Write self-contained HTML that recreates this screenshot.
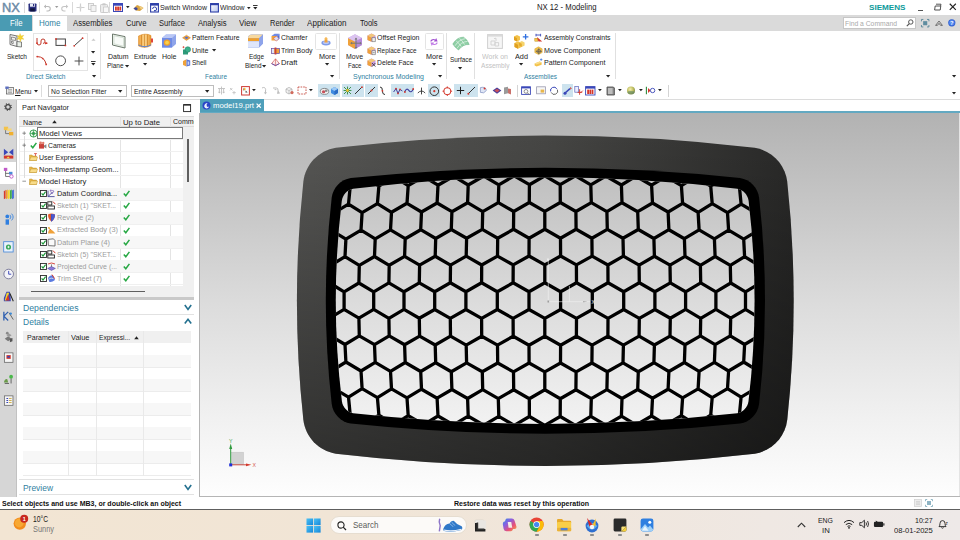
<!DOCTYPE html>
<html lang="en"><head><meta charset="utf-8"><title>NX 12 - Modeling</title>
<style>
html,body{margin:0;padding:0;}
body{width:960px;height:540px;overflow:hidden;position:relative;background:#fff;font-family:"Liberation Sans",sans-serif;}
#r{position:absolute;left:0;top:0;width:960px;height:540px;overflow:hidden;}
#r div,#r .t,#r .i{position:absolute;}
#r div{box-sizing:border-box;}
.t{white-space:nowrap;display:inline-block;transform-origin:0 50%;}
.i{overflow:visible;}
</style></head>
<body><div id="r">
<svg id="vp" width="761" height="386" viewBox="199 112 761 386" style="position:absolute;left:199px;top:112px">
<defs>
<linearGradient id="bg" gradientUnits="userSpaceOnUse" x1="0" y1="112" x2="0" y2="498"><stop offset="0" stop-color="#b2b2b2"/><stop offset="0.5" stop-color="#dcdcdc"/><stop offset="0.75" stop-color="#eeeeee"/><stop offset="1" stop-color="#fefefe"/></linearGradient>
<linearGradient id="fr" x1="0" y1="0" x2="1" y2="0"><stop offset="0" stop-color="#575755"/><stop offset="0.5" stop-color="#464644"/><stop offset="1" stop-color="#292928"/></linearGradient><linearGradient id="fv" x1="0" y1="0" x2="0" y2="1"><stop offset="0" stop-color="#000" stop-opacity="0"/><stop offset="1" stop-color="#000" stop-opacity="0.45"/></linearGradient>
<clipPath id="mc"><path d="M353.04 188.74Q545.20 165.66 737.36 188.74C743.36 190.04 747.86 194.90 748.62 200.90Q760.58 301.14 748.48 401.37C747.71 407.37 743.20 412.17 737.20 413.37Q545.20 434.43 353.20 413.37C347.20 412.17 342.69 407.37 341.92 401.37Q329.68 301.14 341.78 200.90C342.54 194.90 347.04 190.04 353.04 188.74Z"/></clipPath>
</defs>
<rect x="199" y="112" width="761" height="386" fill="url(#bg)"/>
<path d="M335.86 147.79Q545.30 123.41 754.74 147.79C772.14 150.76 785.15 164.34 787.26 181.74Q800.14 300.75 787.26 419.76C785.15 437.16 772.14 450.74 754.74 453.71Q545.30 478.09 335.86 453.71C318.46 450.74 305.45 437.16 303.34 419.76Q290.46 300.75 303.34 181.74C305.45 164.34 318.46 150.76 335.86 147.79Z" fill="url(#fr)"/>
<path d="M335.86 147.79Q545.30 123.41 754.74 147.79C772.14 150.76 785.15 164.34 787.26 181.74Q800.14 300.75 787.26 419.76C785.15 437.16 772.14 450.74 754.74 453.71Q545.30 478.09 335.86 453.71C318.46 450.74 305.45 437.16 303.34 419.76Q290.46 300.75 303.34 181.74C305.45 164.34 318.46 150.76 335.86 147.79Z" fill="url(#fv)"/>
<path d="M350.79 178.04Q545.40 157.56 740.01 178.04C750.21 179.71 757.85 187.63 759.12 197.83Q770.88 300.75 759.12 403.67C757.85 413.87 750.21 421.79 740.01 423.46Q545.40 443.94 350.79 423.46C340.59 421.79 332.95 413.87 331.68 403.67Q319.92 300.75 331.68 197.83C332.95 187.63 340.59 179.71 350.79 178.04Z" fill="#000"/>
<path d="M353.04 188.74Q545.20 165.66 737.36 188.74C743.36 190.04 747.86 194.90 748.62 200.90Q760.58 301.14 748.48 401.37C747.71 407.37 743.20 412.17 737.20 413.37Q545.20 434.43 353.20 413.37C347.20 412.17 342.69 407.37 341.92 401.37Q329.68 301.14 341.78 200.90C342.54 194.90 347.04 190.04 353.04 188.74Z" fill="url(#bg)"/>
<g clip-path="url(#mc)"><path d="M296.9 110.3L311.4 101.0M311.4 101.0L322.1 109.1M322.1 109.1L318.5 126.5M322.1 109.1L336.8 99.8M336.8 99.8L348.0 108.0M348.0 108.0L344.9 125.5M348.0 108.0L362.9 98.7M362.9 98.7L374.8 107.1M374.8 107.1L372.0 124.7M374.8 107.1L389.7 97.8M389.7 97.8L402.1 106.3M402.1 106.3L399.8 123.9M402.1 106.3L417.1 97.1M417.1 97.1L430.0 105.6M430.0 105.6L428.2 123.3M430.0 105.6L445.0 96.5M445.0 96.5L458.3 105.1M458.3 105.1L457.0 122.9M458.3 105.1L473.3 96.0M473.3 96.0L487.0 104.7M487.0 104.7L486.1 122.5M487.0 104.7L501.8 95.7M501.8 95.7L515.8 104.5M515.8 104.5L515.4 122.3M515.8 104.5L530.4 95.5M530.4 95.5L544.8 104.4M544.8 104.4L544.8 122.3M544.8 104.4L559.2 95.5M559.2 95.5L573.8 104.5M573.8 104.5L574.2 122.3M573.8 104.5L587.8 95.7M587.8 95.7L602.6 104.7M602.6 104.7L603.5 122.5M602.6 104.7L616.3 96.0M616.3 96.0L631.3 105.1M631.3 105.1L632.6 122.9M631.3 105.1L644.6 96.5M644.6 96.5L659.6 105.6M659.6 105.6L661.4 123.3M659.6 105.6L672.5 97.1M672.5 97.1L687.5 106.3M687.5 106.3L689.8 123.9M687.5 106.3L699.9 97.8M699.9 97.8L714.8 107.1M714.8 107.1L717.6 124.7M714.8 107.1L726.7 98.7M726.7 98.7L741.6 108.0M741.6 108.0L744.7 125.5M741.6 108.0L752.8 99.8M752.8 99.8L767.5 109.1M767.5 109.1L771.1 126.5M767.5 109.1L778.2 101.0M778.2 101.0L792.7 110.3M792.7 110.3L796.7 127.6M792.7 110.3L802.7 102.4M802.7 102.4L817.0 111.7M817.0 111.7L821.4 128.9M278.5 136.9L292.9 127.6M292.9 127.6L303.8 135.7M303.8 135.7L300.5 153.1M303.8 135.7L318.5 126.5M318.5 126.5L330.0 134.7M330.0 134.7L327.1 152.2M330.0 134.7L344.9 125.5M344.9 125.5L357.0 133.8M357.0 133.8L354.4 151.4M357.0 133.8L372.0 124.7M372.0 124.7L384.7 133.1M384.7 133.1L382.5 150.7M384.7 133.1L399.8 123.9M399.8 123.9L413.0 132.5M413.0 132.5L411.2 150.2M413.0 132.5L428.2 123.3M428.2 123.3L441.8 132.0M441.8 132.0L440.4 149.7M441.8 132.0L457.0 122.9M457.0 122.9L470.9 131.6M470.9 131.6L469.9 149.4M470.9 131.6L486.1 122.5M486.1 122.5L500.4 131.3M500.4 131.3L499.8 149.1M500.4 131.3L515.4 122.3M515.4 122.3L530.0 131.2M530.0 131.2L529.8 149.0M530.0 131.2L544.8 122.3M544.8 122.3L559.6 131.2M559.6 131.2L559.8 149.0M559.6 131.2L574.2 122.3M574.2 122.3L589.2 131.3M589.2 131.3L589.8 149.1M589.2 131.3L603.5 122.5M603.5 122.5L618.7 131.6M618.7 131.6L619.7 149.4M618.7 131.6L632.6 122.9M632.6 122.9L647.8 132.0M647.8 132.0L649.2 149.7M647.8 132.0L661.4 123.3M661.4 123.3L676.6 132.5M676.6 132.5L678.4 150.2M676.6 132.5L689.8 123.9M689.8 123.9L704.9 133.1M704.9 133.1L707.1 150.7M704.9 133.1L717.6 124.7M717.6 124.7L732.6 133.8M732.6 133.8L735.2 151.4M732.6 133.8L744.7 125.5M744.7 125.5L759.6 134.7M759.6 134.7L762.5 152.2M759.6 134.7L771.1 126.5M771.1 126.5L785.8 135.7M785.8 135.7L789.1 153.1M785.8 135.7L796.7 127.6M796.7 127.6L811.1 136.9M811.1 136.9L814.7 154.1M286.0 162.2L300.5 153.1M300.5 153.1L312.3 161.3M312.3 161.3L309.7 178.7M312.3 161.3L327.1 152.2M327.1 152.2L339.4 160.5M339.4 160.5L337.1 178.0M339.4 160.5L354.4 151.4M354.4 151.4L367.3 159.8M367.3 159.8L365.3 177.4M367.3 159.8L382.5 150.7M382.5 150.7L395.9 159.3M395.9 159.3L394.2 176.9M395.9 159.3L411.2 150.2M411.2 150.2L425.0 158.8M425.0 158.8L423.7 176.5M425.0 158.8L440.4 149.7M440.4 149.7L454.6 158.4M454.6 158.4L453.5 176.2M454.6 158.4L469.9 149.4M469.9 149.4L484.4 158.1M484.4 158.1L483.8 176.0M484.4 158.1L499.8 149.1M499.8 149.1L514.6 158.0M514.6 158.0L514.2 175.8M514.6 158.0L529.8 149.0M529.8 149.0L544.8 157.9M544.8 157.9L544.8 175.8M544.8 157.9L559.8 149.0M559.8 149.0L575.0 158.0M575.0 158.0L575.4 175.8M575.0 158.0L589.8 149.1M589.8 149.1L605.2 158.1M605.2 158.1L605.8 176.0M605.2 158.1L619.7 149.4M619.7 149.4L635.0 158.4M635.0 158.4L636.1 176.2M635.0 158.4L649.2 149.7M649.2 149.7L664.6 158.8M664.6 158.8L665.9 176.5M664.6 158.8L678.4 150.2M678.4 150.2L693.7 159.3M693.7 159.3L695.4 176.9M693.7 159.3L707.1 150.7M707.1 150.7L722.3 159.8M722.3 159.8L724.3 177.4M722.3 159.8L735.2 151.4M735.2 151.4L750.2 160.5M750.2 160.5L752.5 178.0M750.2 160.5L762.5 152.2M762.5 152.2L777.3 161.3M777.3 161.3L779.9 178.7M777.3 161.3L789.1 153.1M789.1 153.1L803.6 162.2M803.6 162.2L806.5 179.5M803.6 162.2L814.7 154.1M814.7 154.1L828.9 163.2M828.9 163.2L832.1 180.4M268.8 188.6L283.1 179.5M283.1 179.5L295.0 187.8M295.0 187.8L292.8 205.2M295.0 187.8L309.7 178.7M309.7 178.7L322.2 187.1M322.2 187.1L320.2 204.6M322.2 187.1L337.1 178.0M337.1 178.0L350.2 186.5M350.2 186.5L348.5 204.1M350.2 186.5L365.3 177.4M365.3 177.4L378.9 186.0M378.9 186.0L377.4 203.6M378.9 186.0L394.2 176.9M394.2 176.9L408.2 185.6M408.2 185.6L407.0 203.3M408.2 185.6L423.7 176.5M423.7 176.5L438.0 185.2M438.0 185.2L437.1 203.0M438.0 185.2L453.5 176.2M453.5 176.2L468.2 185.0M468.2 185.0L467.6 202.7M468.2 185.0L483.8 176.0M483.8 176.0L498.8 184.8M498.8 184.8L498.3 202.6M498.8 184.8L514.2 175.8M514.2 175.8L529.4 184.7M529.4 184.7L529.3 202.5M529.4 184.7L544.8 175.8M544.8 175.8L560.2 184.7M560.2 184.7L560.3 202.5M560.2 184.7L575.4 175.8M575.4 175.8L590.8 184.8M590.8 184.8L591.3 202.6M590.8 184.8L605.8 176.0M605.8 176.0L621.4 185.0M621.4 185.0L622.0 202.7M621.4 185.0L636.1 176.2M636.1 176.2L651.6 185.2M651.6 185.2L652.5 203.0M651.6 185.2L665.9 176.5M665.9 176.5L681.4 185.6M681.4 185.6L682.6 203.3M681.4 185.6L695.4 176.9M695.4 176.9L710.7 186.0M710.7 186.0L712.2 203.6M710.7 186.0L724.3 177.4M724.3 177.4L739.4 186.5M739.4 186.5L741.1 204.1M739.4 186.5L752.5 178.0M752.5 178.0L767.4 187.1M767.4 187.1L769.4 204.6M767.4 187.1L779.9 178.7M779.9 178.7L794.6 187.8M794.6 187.8L796.8 205.2M794.6 187.8L806.5 179.5M806.5 179.5L820.8 188.6M820.8 188.6L823.2 205.8M278.5 214.1L292.8 205.2M292.8 205.2L305.5 213.6M305.5 213.6L303.9 231.0M305.5 213.6L320.2 204.6M320.2 204.6L333.4 213.1M333.4 213.1L332.0 230.6M333.4 213.1L348.5 204.1M348.5 204.1L362.1 212.6M362.1 212.6L361.0 230.2M362.1 212.6L377.4 203.6M377.4 203.6L391.5 212.3M391.5 212.3L390.5 229.9M391.5 212.3L407.0 203.3M407.0 203.3L421.5 212.0M421.5 212.0L420.7 229.7M421.5 212.0L437.1 203.0M437.1 203.0L451.9 211.7M451.9 211.7L451.3 229.5M451.9 211.7L467.6 202.7M467.6 202.7L482.7 211.6M482.7 211.6L482.3 229.4M482.7 211.6L498.3 202.6M498.3 202.6L513.7 211.5M513.7 211.5L513.5 229.3M513.7 211.5L529.3 202.5M529.3 202.5L544.8 211.4M544.8 211.4L544.8 229.3M544.8 211.4L560.3 202.5M560.3 202.5L575.9 211.5M575.9 211.5L576.1 229.3M575.9 211.5L591.3 202.6M591.3 202.6L606.9 211.6M606.9 211.6L607.3 229.4M606.9 211.6L622.0 202.7M622.0 202.7L637.7 211.7M637.7 211.7L638.3 229.5M637.7 211.7L652.5 203.0M652.5 203.0L668.1 212.0M668.1 212.0L668.9 229.7M668.1 212.0L682.6 203.3M682.6 203.3L698.1 212.3M698.1 212.3L699.1 229.9M698.1 212.3L712.2 203.6M712.2 203.6L727.5 212.6M727.5 212.6L728.6 230.2M727.5 212.6L741.1 204.1M741.1 204.1L756.2 213.1M756.2 213.1L757.6 230.6M756.2 213.1L769.4 204.6M769.4 204.6L784.1 213.6M784.1 213.6L785.7 231.0M784.1 213.6L796.8 205.2M796.8 205.2L811.1 214.1M811.1 214.1L812.9 231.4M811.1 214.1L823.2 205.8M823.2 205.8L837.2 214.8M837.2 214.8L839.1 231.9M262.7 240.3L276.7 231.4M276.7 231.4L289.5 239.9M289.5 239.9L288.4 257.2M289.5 239.9L303.9 231.0M303.9 231.0L317.3 239.5M317.3 239.5L316.3 257.0M317.3 239.5L332.0 230.6M332.0 230.6L345.9 239.2M345.9 239.2L345.0 256.7M345.9 239.2L361.0 230.2M361.0 230.2L375.2 238.9M375.2 238.9L374.5 256.5M375.2 238.9L390.5 229.9M390.5 229.9L405.2 238.7M405.2 238.7L404.6 256.4M405.2 238.7L420.7 229.7M420.7 229.7L435.7 238.5M435.7 238.5L435.2 256.2M435.7 238.5L451.3 229.5M451.3 229.5L466.6 238.3M466.6 238.3L466.2 256.1M466.6 238.3L482.3 229.4M482.3 229.4L497.7 238.2M497.7 238.2L497.5 256.1M497.7 238.2L513.5 229.3M513.5 229.3L529.1 238.2M529.1 238.2L529.0 256.0M529.1 238.2L544.8 229.3M544.8 229.3L560.5 238.2M560.5 238.2L560.6 256.0M560.5 238.2L576.1 229.3M576.1 229.3L591.9 238.2M591.9 238.2L592.1 256.1M591.9 238.2L607.3 229.4M607.3 229.4L623.0 238.3M623.0 238.3L623.4 256.1M623.0 238.3L638.3 229.5M638.3 229.5L653.9 238.5M653.9 238.5L654.4 256.2M653.9 238.5L668.9 229.7M668.9 229.7L684.4 238.7M684.4 238.7L685.0 256.4M684.4 238.7L699.1 229.9M699.1 229.9L714.4 238.9M714.4 238.9L715.1 256.5M714.4 238.9L728.6 230.2M728.6 230.2L743.7 239.2M743.7 239.2L744.6 256.7M743.7 239.2L757.6 230.6M757.6 230.6L772.3 239.5M772.3 239.5L773.3 257.0M772.3 239.5L785.7 231.0M785.7 231.0L800.1 239.9M800.1 239.9L801.2 257.2M800.1 239.9L812.9 231.4M812.9 231.4L826.9 240.3M826.9 240.3L828.1 257.5M274.4 266.0L288.4 257.2M288.4 257.2L301.8 265.8M301.8 265.8L301.3 283.2M301.8 265.8L316.3 257.0M316.3 257.0L330.2 265.6M330.2 265.6L329.7 283.1M330.2 265.6L345.0 256.7M345.0 256.7L359.3 265.4M359.3 265.4L358.9 283.0M359.3 265.4L374.5 256.5M374.5 256.5L389.2 265.3M389.2 265.3L388.9 282.9M389.2 265.3L404.6 256.4M404.6 256.4L419.6 265.1M419.6 265.1L419.3 282.9M419.6 265.1L435.2 256.2M435.2 256.2L450.5 265.1M450.5 265.1L450.3 282.8M450.5 265.1L466.2 256.1M466.2 256.1L481.7 265.0M481.7 265.0L481.6 282.8M481.7 265.0L497.5 256.1M497.5 256.1L513.2 264.9M513.2 264.9L513.1 282.8M513.2 264.9L529.0 256.0M529.0 256.0L544.8 264.9M544.8 264.9L544.8 282.8M544.8 264.9L560.6 256.0M560.6 256.0L576.4 264.9M576.4 264.9L576.5 282.8M576.4 264.9L592.1 256.1M592.1 256.1L607.9 265.0M607.9 265.0L608.0 282.8M607.9 265.0L623.4 256.1M623.4 256.1L639.1 265.1M639.1 265.1L639.3 282.8M639.1 265.1L654.4 256.2M654.4 256.2L670.0 265.1M670.0 265.1L670.3 282.9M670.0 265.1L685.0 256.4M685.0 256.4L700.4 265.3M700.4 265.3L700.7 282.9M700.4 265.3L715.1 256.5M715.1 256.5L730.3 265.4M730.3 265.4L730.7 283.0M730.3 265.4L744.6 256.7M744.6 256.7L759.4 265.6M759.4 265.6L759.9 283.1M759.4 265.6L773.3 257.0M773.3 257.0L787.8 265.8M787.8 265.8L788.3 283.2M787.8 265.8L801.2 257.2M801.2 257.2L815.2 266.0M815.2 266.0L815.8 283.3M815.2 266.0L828.1 257.5M828.1 257.5L841.7 266.3M841.7 266.3L842.3 283.4M260.3 292.0L273.8 283.3M273.8 283.3L287.3 291.9M287.3 291.9L287.3 309.3M287.3 291.9L301.3 283.2M301.3 283.2L315.3 291.9M315.3 291.9L315.3 309.3M315.3 291.9L329.7 283.1M329.7 283.1L344.1 291.8M344.1 291.8L344.1 309.4M344.1 291.8L358.9 283.0M358.9 283.0L373.7 291.8M373.7 291.8L373.7 309.4M373.7 291.8L388.9 282.9M388.9 282.9L404.0 291.8M404.0 291.8L404.0 309.4M404.0 291.8L419.3 282.9M419.3 282.9L434.7 291.7M434.7 291.7L434.7 309.5M434.7 291.7L450.3 282.8M450.3 282.8L465.9 291.7M465.9 291.7L465.9 309.5M465.9 291.7L481.6 282.8M481.6 282.8L497.3 291.7M497.3 291.7L497.3 309.5M497.3 291.7L513.1 282.8M513.1 282.8L529.0 291.7M529.0 291.7L529.0 309.5M529.0 291.7L544.8 282.8M544.8 282.8L560.6 291.7M560.6 291.7L560.6 309.5M560.6 291.7L576.5 282.8M576.5 282.8L592.3 291.7M592.3 291.7L592.3 309.5M592.3 291.7L608.0 282.8M608.0 282.8L623.7 291.7M623.7 291.7L623.7 309.5M623.7 291.7L639.3 282.8M639.3 282.8L654.9 291.7M654.9 291.7L654.9 309.5M654.9 291.7L670.3 282.9M670.3 282.9L685.6 291.8M685.6 291.8L685.6 309.4M685.6 291.8L700.7 282.9M700.7 282.9L715.9 291.8M715.9 291.8L715.9 309.4M715.9 291.8L730.7 283.0M730.7 283.0L745.5 291.8M745.5 291.8L745.5 309.4M745.5 291.8L759.9 283.1M759.9 283.1L774.3 291.9M774.3 291.9L774.3 309.3M774.3 291.9L788.3 283.2M788.3 283.2L802.3 291.9M802.3 291.9L802.3 309.3M802.3 291.9L815.8 283.3M815.8 283.3L829.3 292.0M829.3 292.0L829.3 309.2M273.8 317.9L287.3 309.3M287.3 309.3L301.3 318.0M301.3 318.0L301.8 335.4M301.3 318.0L315.3 309.3M315.3 309.3L329.7 318.1M329.7 318.1L330.2 335.6M329.7 318.1L344.1 309.4M344.1 309.4L358.9 318.2M358.9 318.2L359.3 335.8M358.9 318.2L373.7 309.4M373.7 309.4L388.9 318.3M388.9 318.3L389.2 335.9M388.9 318.3L404.0 309.4M404.0 309.4L419.3 318.3M419.3 318.3L419.6 336.1M419.3 318.3L434.7 309.5M434.7 309.5L450.3 318.4M450.3 318.4L450.5 336.1M450.3 318.4L465.9 309.5M465.9 309.5L481.6 318.4M481.6 318.4L481.7 336.2M481.6 318.4L497.3 309.5M497.3 309.5L513.1 318.4M513.1 318.4L513.2 336.3M513.1 318.4L529.0 309.5M529.0 309.5L544.8 318.4M544.8 318.4L544.8 336.3M544.8 318.4L560.6 309.5M560.6 309.5L576.5 318.4M576.5 318.4L576.4 336.3M576.5 318.4L592.3 309.5M592.3 309.5L608.0 318.4M608.0 318.4L607.9 336.2M608.0 318.4L623.7 309.5M623.7 309.5L639.3 318.4M639.3 318.4L639.1 336.1M639.3 318.4L654.9 309.5M654.9 309.5L670.3 318.3M670.3 318.3L670.0 336.1M670.3 318.3L685.6 309.4M685.6 309.4L700.7 318.3M700.7 318.3L700.4 335.9M700.7 318.3L715.9 309.4M715.9 309.4L730.7 318.2M730.7 318.2L730.3 335.8M730.7 318.2L745.5 309.4M745.5 309.4L759.9 318.1M759.9 318.1L759.4 335.6M759.9 318.1L774.3 309.3M774.3 309.3L788.3 318.0M788.3 318.0L787.8 335.4M788.3 318.0L802.3 309.3M802.3 309.3L815.8 317.9M815.8 317.9L815.2 335.2M815.8 317.9L829.3 309.2M829.3 309.2L842.3 317.8M842.3 317.8L841.7 334.9M261.5 343.7L274.4 335.2M274.4 335.2L288.4 344.0M288.4 344.0L289.5 361.3M288.4 344.0L301.8 335.4M301.8 335.4L316.3 344.2M316.3 344.2L317.3 361.7M316.3 344.2L330.2 335.6M330.2 335.6L345.0 344.5M345.0 344.5L345.9 362.0M345.0 344.5L359.3 335.8M359.3 335.8L374.5 344.7M374.5 344.7L375.2 362.3M374.5 344.7L389.2 335.9M389.2 335.9L404.6 344.8M404.6 344.8L405.2 362.5M404.6 344.8L419.6 336.1M419.6 336.1L435.2 345.0M435.2 345.0L435.7 362.7M435.2 345.0L450.5 336.1M450.5 336.1L466.2 345.1M466.2 345.1L466.6 362.9M466.2 345.1L481.7 336.2M481.7 336.2L497.5 345.1M497.5 345.1L497.7 363.0M497.5 345.1L513.2 336.3M513.2 336.3L529.0 345.2M529.0 345.2L529.1 363.0M529.0 345.2L544.8 336.3M544.8 336.3L560.6 345.2M560.6 345.2L560.5 363.0M560.6 345.2L576.4 336.3M576.4 336.3L592.1 345.1M592.1 345.1L591.9 363.0M592.1 345.1L607.9 336.2M607.9 336.2L623.4 345.1M623.4 345.1L623.0 362.9M623.4 345.1L639.1 336.1M639.1 336.1L654.4 345.0M654.4 345.0L653.9 362.7M654.4 345.0L670.0 336.1M670.0 336.1L685.0 344.8M685.0 344.8L684.4 362.5M685.0 344.8L700.4 335.9M700.4 335.9L715.1 344.7M715.1 344.7L714.4 362.3M715.1 344.7L730.3 335.8M730.3 335.8L744.6 344.5M744.6 344.5L743.7 362.0M744.6 344.5L759.4 335.6M759.4 335.6L773.3 344.2M773.3 344.2L772.3 361.7M773.3 344.2L787.8 335.4M787.8 335.4L801.2 344.0M801.2 344.0L800.1 361.3M801.2 344.0L815.2 335.2M815.2 335.2L828.1 343.7M828.1 343.7L826.9 360.9M276.7 369.8L289.5 361.3M289.5 361.3L303.9 370.2M303.9 370.2L305.5 387.6M303.9 370.2L317.3 361.7M317.3 361.7L332.0 370.6M332.0 370.6L333.4 388.1M332.0 370.6L345.9 362.0M345.9 362.0L361.0 371.0M361.0 371.0L362.1 388.6M361.0 371.0L375.2 362.3M375.2 362.3L390.5 371.3M390.5 371.3L391.5 388.9M390.5 371.3L405.2 362.5M405.2 362.5L420.7 371.5M420.7 371.5L421.5 389.2M420.7 371.5L435.7 362.7M435.7 362.7L451.3 371.7M451.3 371.7L451.9 389.5M451.3 371.7L466.6 362.9M466.6 362.9L482.3 371.8M482.3 371.8L482.7 389.6M482.3 371.8L497.7 363.0M497.7 363.0L513.5 371.9M513.5 371.9L513.7 389.7M513.5 371.9L529.1 363.0M529.1 363.0L544.8 371.9M544.8 371.9L544.8 389.8M544.8 371.9L560.5 363.0M560.5 363.0L576.1 371.9M576.1 371.9L575.9 389.7M576.1 371.9L591.9 363.0M591.9 363.0L607.3 371.8M607.3 371.8L606.9 389.6M607.3 371.8L623.0 362.9M623.0 362.9L638.3 371.7M638.3 371.7L637.7 389.5M638.3 371.7L653.9 362.7M653.9 362.7L668.9 371.5M668.9 371.5L668.1 389.2M668.9 371.5L684.4 362.5M684.4 362.5L699.1 371.3M699.1 371.3L698.1 388.9M699.1 371.3L714.4 362.3M714.4 362.3L728.6 371.0M728.6 371.0L727.5 388.6M728.6 371.0L743.7 362.0M743.7 362.0L757.6 370.6M757.6 370.6L756.2 388.1M757.6 370.6L772.3 361.7M772.3 361.7L785.7 370.2M785.7 370.2L784.1 387.6M785.7 370.2L800.1 361.3M800.1 361.3L812.9 369.8M812.9 369.8L811.1 387.1M812.9 369.8L826.9 360.9M826.9 360.9L839.1 369.3M839.1 369.3L837.2 386.4M266.4 395.4L278.5 387.1M278.5 387.1L292.8 396.0M292.8 396.0L295.0 413.4M292.8 396.0L305.5 387.6M305.5 387.6L320.2 396.6M320.2 396.6L322.2 414.1M320.2 396.6L333.4 388.1M333.4 388.1L348.5 397.1M348.5 397.1L350.2 414.7M348.5 397.1L362.1 388.6M362.1 388.6L377.4 397.6M377.4 397.6L378.9 415.2M377.4 397.6L391.5 388.9M391.5 388.9L407.0 397.9M407.0 397.9L408.2 415.6M407.0 397.9L421.5 389.2M421.5 389.2L437.1 398.2M437.1 398.2L438.0 416.0M437.1 398.2L451.9 389.5M451.9 389.5L467.6 398.5M467.6 398.5L468.2 416.2M467.6 398.5L482.7 389.6M482.7 389.6L498.3 398.6M498.3 398.6L498.8 416.4M498.3 398.6L513.7 389.7M513.7 389.7L529.3 398.7M529.3 398.7L529.4 416.5M529.3 398.7L544.8 389.8M544.8 389.8L560.3 398.7M560.3 398.7L560.2 416.5M560.3 398.7L575.9 389.7M575.9 389.7L591.3 398.6M591.3 398.6L590.8 416.4M591.3 398.6L606.9 389.6M606.9 389.6L622.0 398.5M622.0 398.5L621.4 416.2M622.0 398.5L637.7 389.5M637.7 389.5L652.5 398.2M652.5 398.2L651.6 416.0M652.5 398.2L668.1 389.2M668.1 389.2L682.6 397.9M682.6 397.9L681.4 415.6M682.6 397.9L698.1 388.9M698.1 388.9L712.2 397.6M712.2 397.6L710.7 415.2M712.2 397.6L727.5 388.6M727.5 388.6L741.1 397.1M741.1 397.1L739.4 414.7M741.1 397.1L756.2 388.1M756.2 388.1L769.4 396.6M769.4 396.6L767.4 414.1M769.4 396.6L784.1 387.6M784.1 387.6L796.8 396.0M796.8 396.0L794.6 413.4M796.8 396.0L811.1 387.1M811.1 387.1L823.2 395.4M823.2 395.4L820.8 412.6M283.1 421.7L295.0 413.4M295.0 413.4L309.7 422.5M309.7 422.5L312.3 439.9M309.7 422.5L322.2 414.1M322.2 414.1L337.1 423.2M337.1 423.2L339.4 440.7M337.1 423.2L350.2 414.7M350.2 414.7L365.3 423.8M365.3 423.8L367.3 441.4M365.3 423.8L378.9 415.2M378.9 415.2L394.2 424.3M394.2 424.3L395.9 441.9M394.2 424.3L408.2 415.6M408.2 415.6L423.7 424.7M423.7 424.7L425.0 442.4M423.7 424.7L438.0 416.0M438.0 416.0L453.5 425.0M453.5 425.0L454.6 442.8M453.5 425.0L468.2 416.2M468.2 416.2L483.8 425.2M483.8 425.2L484.4 443.1M483.8 425.2L498.8 416.4M498.8 416.4L514.2 425.4M514.2 425.4L514.6 443.2M514.2 425.4L529.4 416.5M529.4 416.5L544.8 425.4M544.8 425.4L544.8 443.3M544.8 425.4L560.2 416.5M560.2 416.5L575.4 425.4M575.4 425.4L575.0 443.2M575.4 425.4L590.8 416.4M590.8 416.4L605.8 425.2M605.8 425.2L605.2 443.1M605.8 425.2L621.4 416.2M621.4 416.2L636.1 425.0M636.1 425.0L635.0 442.8M636.1 425.0L651.6 416.0M651.6 416.0L665.9 424.7M665.9 424.7L664.6 442.4M665.9 424.7L681.4 415.6M681.4 415.6L695.4 424.3M695.4 424.3L693.7 441.9M695.4 424.3L710.7 415.2M710.7 415.2L724.3 423.8M724.3 423.8L722.3 441.4M724.3 423.8L739.4 414.7M739.4 414.7L752.5 423.2M752.5 423.2L750.2 440.7M752.5 423.2L767.4 414.1M767.4 414.1L779.9 422.5M779.9 422.5L777.3 439.9M779.9 422.5L794.6 413.4M794.6 413.4L806.5 421.7M806.5 421.7L803.6 439.0M806.5 421.7L820.8 412.6M820.8 412.6L832.1 420.8M832.1 420.8L828.9 438.0M274.9 447.1L286.0 439.0M286.0 439.0L300.5 448.1M300.5 448.1L303.8 465.5M300.5 448.1L312.3 439.9M312.3 439.9L327.1 449.0M327.1 449.0L330.0 466.5M327.1 449.0L339.4 440.7M339.4 440.7L354.4 449.8M354.4 449.8L357.0 467.4M354.4 449.8L367.3 441.4M367.3 441.4L382.5 450.5M382.5 450.5L384.7 468.1M382.5 450.5L395.9 441.9M395.9 441.9L411.2 451.0M411.2 451.0L413.0 468.7M411.2 451.0L425.0 442.4M425.0 442.4L440.4 451.5M440.4 451.5L441.8 469.2M440.4 451.5L454.6 442.8M454.6 442.8L469.9 451.8M469.9 451.8L470.9 469.6M469.9 451.8L484.4 443.1M484.4 443.1L499.8 452.1M499.8 452.1L500.4 469.9M499.8 452.1L514.6 443.2M514.6 443.2L529.8 452.2M529.8 452.2L530.0 470.0M529.8 452.2L544.8 443.3M544.8 443.3L559.8 452.2M559.8 452.2L559.6 470.0M559.8 452.2L575.0 443.2M575.0 443.2L589.8 452.1M589.8 452.1L589.2 469.9M589.8 452.1L605.2 443.1M605.2 443.1L619.7 451.8M619.7 451.8L618.7 469.6M619.7 451.8L635.0 442.8M635.0 442.8L649.2 451.5M649.2 451.5L647.8 469.2M649.2 451.5L664.6 442.4M664.6 442.4L678.4 451.0M678.4 451.0L676.6 468.7M678.4 451.0L693.7 441.9M693.7 441.9L707.1 450.5M707.1 450.5L704.9 468.1M707.1 450.5L722.3 441.4M722.3 441.4L735.2 449.8M735.2 449.8L732.6 467.4M735.2 449.8L750.2 440.7M750.2 440.7L762.5 449.0M762.5 449.0L759.6 466.5M762.5 449.0L777.3 439.9M777.3 439.9L789.1 448.1M789.1 448.1L785.8 465.5M789.1 448.1L803.6 439.0M803.6 439.0L814.7 447.1M814.7 447.1L811.1 464.3M292.9 473.6L303.8 465.5M303.8 465.5L318.5 474.7M318.5 474.7L322.1 492.1M318.5 474.7L330.0 466.5M330.0 466.5L344.9 475.7M344.9 475.7L348.0 493.2M344.9 475.7L357.0 467.4M357.0 467.4L372.0 476.5M372.0 476.5L374.8 494.1M372.0 476.5L384.7 468.1M384.7 468.1L399.8 477.3M399.8 477.3L402.1 494.9M399.8 477.3L413.0 468.7M413.0 468.7L428.2 477.9M428.2 477.9L430.0 495.6M428.2 477.9L441.8 469.2M441.8 469.2L457.0 478.3M457.0 478.3L458.3 496.1M457.0 478.3L470.9 469.6M470.9 469.6L486.1 478.7M486.1 478.7L487.0 496.5M486.1 478.7L500.4 469.9M500.4 469.9L515.4 478.9M515.4 478.9L515.8 496.7M515.4 478.9L530.0 470.0M530.0 470.0L544.8 478.9M544.8 478.9L544.8 496.8M544.8 478.9L559.6 470.0M559.6 470.0L574.2 478.9M574.2 478.9L573.8 496.7M574.2 478.9L589.2 469.9M589.2 469.9L603.5 478.7M603.5 478.7L602.6 496.5M603.5 478.7L618.7 469.6M618.7 469.6L632.6 478.3M632.6 478.3L631.3 496.1M632.6 478.3L647.8 469.2M647.8 469.2L661.4 477.9M661.4 477.9L659.6 495.6M661.4 477.9L676.6 468.7M676.6 468.7L689.8 477.3M689.8 477.3L687.5 494.9M689.8 477.3L704.9 468.1M704.9 468.1L717.6 476.5M717.6 476.5L714.8 494.1M717.6 476.5L732.6 467.4M732.6 467.4L744.7 475.7M744.7 475.7L741.6 493.2M744.7 475.7L759.6 466.5M759.6 466.5L771.1 474.7M771.1 474.7L767.5 492.1M771.1 474.7L785.8 465.5M785.8 465.5L796.7 473.6M796.7 473.6L792.7 490.9M796.7 473.6L811.1 464.3M811.1 464.3L821.4 472.3M821.4 472.3L817.0 489.5" fill="none" stroke="#000" stroke-width="3.3" stroke-linecap="round"/></g>
<g stroke="#f4f4f4" stroke-width="0.7" opacity="0.8" fill="none"><path d="M548.3 259V301.7H590M569.4 286V301.7"/></g>
<path d="M547.5 300.5h1.6v2h-1.6zM583 301.2l4.5 0.5l-4.5 0.5z" fill="#8a8a8a" opacity="0.8"/>
<path d="M546.8 258.5h2.2l-1.1 3.5z" fill="#efefef" opacity="0.9"/>
<text x="591.5" y="303.8" font-size="5" fill="#f6f6f6" font-family="Liberation Sans, sans-serif">X</text>
<rect x="231.6" y="452.2" width="12" height="12" fill="#d2d2d2" stroke="#c2c2c2" stroke-width="0.5"/>
<path d="M230.7 464.8V447" stroke="#2e9a3e" stroke-width="1"/><path d="M230.7 443.4L229.2 449H232.2Z" fill="#2e9a3e"/>
<path d="M230.7 464.8H247" stroke="#c8463c" stroke-width="1"/><path d="M251.4 464.8L246 463.4V466.2Z" fill="#d4382c"/>
<rect x="229.2" y="463.4" width="3" height="3" fill="#2030d8"/>
<text x="230.8" y="442.6" font-size="5.2" text-anchor="middle" fill="#3aa04a" font-family="Liberation Sans, sans-serif">Y</text>
<text x="252.6" y="466.8" font-size="5.2" fill="#d4584c" font-family="Liberation Sans, sans-serif">X</text>
</svg>
<div style="left:0px;top:0px;width:960px;height:15px;background:#ffffff;"></div>
<span class="t" style="transform:scaleX(1.017);left:2px;top:1px;font-size:12.6px;line-height:14.6px;color:#6c8aa6;-webkit-text-stroke:0.45px #6c8aa6;">NX</span>
<div style="left:24px;top:2px;width:1px;height:11px;background:#d9d9d9;"></div>
<div style="left:39px;top:2px;width:1px;height:11px;background:#d9d9d9;"></div>
<div style="left:72px;top:2px;width:1px;height:11px;background:#d9d9d9;"></div>
<div style="left:109px;top:2px;width:1px;height:11px;background:#d9d9d9;"></div>
<div style="left:147px;top:2px;width:1px;height:11px;background:#d9d9d9;"></div>
<svg class="i" style="left:28px;top:3px" width="9" height="9" viewBox="0 0 9 9"><rect x="0.5" y="0.5" width="8" height="8" rx="0.8" fill="#2a2f7e"/><rect x="2" y="0.5" width="5" height="3.2" fill="#e8ecf5"/><rect x="2.2" y="5.3" width="4.6" height="3.2" fill="#10143f"/><rect x="5" y="1" width="1.2" height="2.2" fill="#2a2f7e"/></svg>
<svg class="i" style="left:43px;top:3px" width="8" height="9" viewBox="0 0 8 9"><path d="M1.5 3.5H5a2 2 0 0 1 0 4.5H3.5" fill="none" stroke="#b9b9b9" stroke-width="1.1"/><path d="M3 1.5L0.8 3.5L3 5.5Z" fill="#b9b9b9"/></svg>
<svg class="i" style="left:54.8px;top:6.48px" width="3.4" height="2.04" viewBox="0 0 3.4 2.04"><path d="M0 0H3.4L1.7 2.04Z" fill="#9a9a9a"/></svg>
<svg class="i" style="left:61px;top:3px" width="8" height="9" viewBox="0 0 8 9"><path d="M6.5 3.5H3a2 2 0 0 0 0 4.5H4.5" fill="none" stroke="#c4c4c4" stroke-width="1.1"/><path d="M5 1.5L7.2 3.5L5 5.5Z" fill="#c4c4c4"/></svg>
<svg class="i" style="left:76px;top:3px" width="9" height="9" viewBox="0 0 9 9"><path d="M4.5 0.5V8.5M0.5 4.5H8.5" stroke="#cfcfcf" stroke-width="1.2"/><circle cx="4.5" cy="4.5" r="1.2" fill="#d6d6d6"/></svg>
<svg class="i" style="left:88px;top:3px" width="9" height="9" viewBox="0 0 9 9"><rect x="0.5" y="0.5" width="5" height="6" fill="#f3f3f3" stroke="#c4c4c4" stroke-width="0.8"/><rect x="3" y="2.5" width="5" height="6" fill="#f3f3f3" stroke="#c4c4c4" stroke-width="0.8"/></svg>
<svg class="i" style="left:100px;top:2.5px" width="9" height="10" viewBox="0 0 9 10"><rect x="0.5" y="1.5" width="7" height="8" rx="0.8" fill="#ececec" stroke="#c4c4c4" stroke-width="0.8"/><rect x="2.5" y="0.3" width="3" height="2" fill="#c9c9c9"/><rect x="3.5" y="4" width="5" height="5.5" fill="#f8f8f8" stroke="#c4c4c4" stroke-width="0.7"/></svg>
<svg class="i" style="left:113px;top:3px" width="10" height="9" viewBox="0 0 10 9"><rect x="0.5" y="0.5" width="9" height="8" fill="#fff" stroke="#3a47b8" stroke-width="1"/><rect x="0.5" y="0.5" width="9" height="2.2" fill="#3a47b8"/><rect x="2" y="3.6" width="1.8" height="4" fill="#d8392b"/><rect x="4.2" y="3.6" width="1.8" height="4" fill="#d8392b"/><rect x="6.4" y="3.6" width="1.8" height="4" fill="#d8392b"/></svg>
<svg class="i" style="left:125.7px;top:6.42px" width="3.6" height="2.16" viewBox="0 0 3.6 2.16"><path d="M0 0H3.6L1.8 2.16Z" fill="#222"/></svg>
<svg class="i" style="left:133px;top:3.5px" width="11" height="8" viewBox="0 0 11 8"><path d="M0.5 4.5L4 1L8 2.5L10.5 4L7 7L3 6.5Z" fill="#d9a441"/><path d="M0.5 4.5L3 3L5 5L3 6.5Z" fill="#40489c"/><path d="M6 2L10.5 4L8 5.5Z" fill="#f1cf85"/></svg>
<svg class="i" style="left:150px;top:2.5px" width="9" height="10" viewBox="0 0 9 10"><rect x="0.6" y="0.6" width="7.8" height="8.4" fill="#fff" stroke="#2c3ea8" stroke-width="1.1"/><rect x="0.6" y="0.6" width="7.8" height="2" fill="#2c3ea8"/><path d="M2.6 6a2 2 0 1 1 2 2" fill="none" stroke="#2c3ea8" stroke-width="1"/><path d="M5.6 7L4.2 8.6L3.9 6.9Z" fill="#2c3ea8"/></svg>
<span class="t" style="transform:scaleX(0.866);left:160px;top:2.7px;font-size:8px;line-height:10px;color:#1a1a1a;">Switch Window</span>
<svg class="i" style="left:210px;top:2.5px" width="9" height="10" viewBox="0 0 9 10"><defs><linearGradient id="wg" x1="0" y1="0" x2="1" y2="1"><stop offset="0" stop-color="#fff"/><stop offset="1" stop-color="#b9c6ef"/></linearGradient></defs><rect x="0.6" y="0.6" width="7.8" height="8.4" fill="url(#wg)" stroke="#2c3ea8" stroke-width="1.1"/><rect x="0.6" y="0.6" width="7.8" height="1.6" fill="#2c3ea8"/></svg>
<span class="t" style="transform:scaleX(0.861);left:220px;top:2.7px;font-size:8px;line-height:10px;color:#1a1a1a;">Window</span>
<svg class="i" style="left:247.2px;top:6.72px" width="3.6" height="2.16" viewBox="0 0 3.6 2.16"><path d="M0 0H3.6L1.8 2.16Z" fill="#222"/></svg>
<svg class="i" style="left:253px;top:5.2px" width="4.6" height="5" viewBox="0 0 4.6 5"><path d="M0 0.5H4.6" stroke="#222" stroke-width="0.9"/><path d="M0.2 2H4.4L2.3 4.4Z" fill="#222"/></svg>
<span class="t" style="transform:scaleX(0.940);left:536.5px;top:3.3px;font-size:8.2px;line-height:10.2px;color:#1a1a1a;">NX 12 - Modeling</span>
<span class="t" style="transform:scaleX(1.068);left:869px;top:3.4px;font-size:7.6px;line-height:9.6px;color:#0b9a9a;font-weight:bold;">SIEMENS</span>
<div style="left:918px;top:9.5px;width:4.5px;height:1.3px;background:#555;"></div>
<svg class="i" style="left:933.5px;top:3px" width="8" height="8" viewBox="0 0 8 8"><path d="M2 1.2H7L6.6 3" fill="none" stroke="#444" stroke-width="0.9"/><rect x="0.8" y="3" width="5.6" height="4" fill="none" stroke="#444" stroke-width="0.9" transform="skewX(-8) translate(0.8 0)"/></svg>
<svg class="i" style="left:948.5px;top:3.2px" width="7.6" height="7.6" viewBox="0 0 8 8"><path d="M0.8 0.8L7.2 7.2M7.2 0.8L0.8 7.2" stroke="#222" stroke-width="1.15"/></svg>
<div style="left:0px;top:15px;width:960px;height:15.5px;background:#dadada;"></div>
<div style="left:0px;top:15px;width:32px;height:15.5px;background:#4a9bb3;"></div>
<div style="left:32.5px;top:15.5px;width:34.5px;height:15.5px;background:#ffffff;"></div>
<span class="t" style="transform:scaleX(0.926);left:9.5px;top:17.7px;font-size:8.4px;line-height:10.4px;color:#ffffff;">File</span>
<span class="t" style="transform:scaleX(0.962);left:39px;top:17.7px;font-size:8.4px;line-height:10.4px;color:#2f7f9f;">Home</span>
<span class="t" style="transform:scaleX(0.922);left:73px;top:17.7px;font-size:8.4px;line-height:10.4px;color:#1c1c1c;">Assemblies</span>
<span class="t" style="transform:scaleX(0.917);left:125.5px;top:17.7px;font-size:8.4px;line-height:10.4px;color:#1c1c1c;">Curve</span>
<span class="t" style="transform:scaleX(0.900);left:159px;top:17.7px;font-size:8.4px;line-height:10.4px;color:#1c1c1c;">Surface</span>
<span class="t" style="transform:scaleX(0.914);left:198px;top:17.7px;font-size:8.4px;line-height:10.4px;color:#1c1c1c;">Analysis</span>
<span class="t" style="transform:scaleX(0.971);left:239px;top:17.7px;font-size:8.4px;line-height:10.4px;color:#1c1c1c;">View</span>
<span class="t" style="transform:scaleX(0.892);left:269.5px;top:17.7px;font-size:8.4px;line-height:10.4px;color:#1c1c1c;">Render</span>
<span class="t" style="transform:scaleX(0.964);left:307px;top:17.7px;font-size:8.4px;line-height:10.4px;color:#1c1c1c;">Application</span>
<span class="t" style="transform:scaleX(0.895);left:359.5px;top:17.7px;font-size:8.4px;line-height:10.4px;color:#1c1c1c;">Tools</span>
<div style="left:842.5px;top:17px;width:73px;height:11.5px;background:#ffffff;border:0.6px solid #c6c6c6;"></div>
<span class="t" style="transform:scaleX(0.917);left:845px;top:18.5px;font-size:7.4px;line-height:9.4px;color:#a9a9a9;">Find a Command</span>
<svg class="i" style="left:905.5px;top:18.5px" width="8" height="8" viewBox="0 0 8 8"><circle cx="4.8" cy="3" r="2.2" fill="none" stroke="#555" stroke-width="1"/><path d="M3.3 4.6L0.8 7.2" stroke="#555" stroke-width="1.2"/></svg>
<svg class="i" style="left:921px;top:18.5px" width="8.4" height="8.4" viewBox="0 0 9 9"><path d="M0.5 2.5V0.5H2.5M6.5 0.5H8.5V2.5M8.5 6.5V8.5H6.5M2.5 8.5H0.5V6.5" fill="none" stroke="#4b7f93" stroke-width="0.9"/><rect x="2.3" y="2.3" width="4.4" height="4.4" fill="#5f8da0"/></svg>
<svg class="i" style="left:934.5px;top:19.8px" width="8" height="6" viewBox="0 0 8 6"><path d="M0.6 5.4L4 1L7.4 5.4L5.6 5.4L4 3.3L2.4 5.4Z" fill="none" stroke="#555" stroke-width="0.8"/></svg>
<svg class="i" style="left:947.8px;top:18.8px" width="7.6" height="7.6" viewBox="0 0 8 8"><circle cx="4" cy="4" r="3.8" fill="#2f5fd0"/><circle cx="4" cy="4" r="2.9" fill="#4f86ef"/><text x="4" y="6.3" font-size="6" font-weight="bold" text-anchor="middle" fill="#fff" font-family="Liberation Sans, sans-serif">?</text></svg>
<div style="left:0px;top:30.5px;width:960px;height:50.5px;background:#ffffff;"></div>
<div style="left:0px;top:80.5px;width:960px;height:0.8px;background:#e3e3e3;"></div>
<div style="left:100px;top:33px;width:0.8px;height:45.5px;background:#e0e0e0;"></div>
<div style="left:339px;top:33px;width:0.8px;height:45.5px;background:#e0e0e0;"></div>
<div style="left:446px;top:33px;width:0.8px;height:45.5px;background:#e0e0e0;"></div>
<div style="left:474px;top:33px;width:0.8px;height:45.5px;background:#e0e0e0;"></div>
<div style="left:615px;top:33px;width:0.8px;height:45.5px;background:#e0e0e0;"></div>
<svg class="i" style="left:8px;top:33px" width="17" height="16" viewBox="0 0 17 16"><path d="M2 1.5L9 3V13.5L2 11.5Z" fill="#f2f2f2" stroke="#666" stroke-width="0.9"/><path d="M3.5 4L7.5 4.8V7.5L3.5 6.8Z M3.5 8L5.2 8.4V10.6L3.5 10.2Z" fill="none" stroke="#666" stroke-width="0.7"/><path d="M9 8.5L13.5 9V14L9 13.5Z" fill="#e9f0e9" stroke="#666" stroke-width="0.8"/><path d="M12 0.5L13 3L15.8 2.3L14 4.4L16 6.3L13.2 6L12.4 8.6L11.4 6L8.6 6.4L10.6 4.4L9 2.2L11.4 3Z" fill="#f5d531" stroke="#d9b10c" stroke-width="0.3"/></svg>
<span class="t" style="transform:scaleX(0.817);left:6.5px;top:52.2px;font-size:8px;line-height:10px;color:#1c1c1c;">Sketch</span>
<div style="left:32.5px;top:33px;width:55px;height:37.5px;background:#fff;border:0.7px solid #e4e4e4;"></div>
<svg class="i" style="left:36px;top:37px" width="12" height="10" viewBox="0 0 12 10"><path d="M1 1V6a2 2 0 0 0 4 0V4a2 2 0 0 1 4 0a2 2 0 0 1-2 2.4" fill="none" stroke="#c0392b" stroke-width="1"/><circle cx="1" cy="6.2" r="0.9" fill="#d4382c"/><circle cx="10.6" cy="6.2" r="0.9" fill="#d4382c"/><path d="M9 5L11 6.3L9 7.6Z" fill="#d4382c"/></svg>
<svg class="i" style="left:54.5px;top:37.5px" width="12" height="9" viewBox="0 0 12 9"><rect x="1" y="1" width="9.4" height="6.4" fill="none" stroke="#444" stroke-width="1"/><circle cx="1" cy="1" r="0.9" fill="#d4382c"/><circle cx="10.4" cy="7.4" r="0.9" fill="#d4382c"/></svg>
<svg class="i" style="left:73px;top:37px" width="11" height="10" viewBox="0 0 11 10"><path d="M1.2 8.8L9.6 1.2" stroke="#444" stroke-width="1"/><circle cx="1.2" cy="8.8" r="0.9" fill="#d4382c"/><circle cx="9.6" cy="1.2" r="0.9" fill="#d4382c"/></svg>
<svg class="i" style="left:36px;top:55px" width="12" height="11" viewBox="0 0 12 11"><path d="M1.2 1.6Q8.4 1.6 10.2 9.4" fill="none" stroke="#c0392b" stroke-width="1"/><circle cx="1.2" cy="1.6" r="0.9" fill="#d4382c"/><circle cx="10.2" cy="9.4" r="0.9" fill="#d4382c"/><circle cx="6.8" cy="3.6" r="0.8" fill="#d4382c"/></svg>
<svg class="i" style="left:54.5px;top:55px" width="12" height="12" viewBox="0 0 12 12"><circle cx="5.6" cy="5.8" r="4.9" fill="none" stroke="#444" stroke-width="0.95"/></svg>
<svg class="i" style="left:73.5px;top:55.5px" width="10" height="10" viewBox="0 0 10 10"><path d="M5 0.6V9.4M0.6 5H9.4" stroke="#444" stroke-width="0.95"/></svg>
<svg class="i" style="left:91px;top:37.5px" width="5" height="3" viewBox="0 0 5 3"><path d="M0.4 2.8L2.5 0.4L4.6 2.8Z" fill="#c8c8c8"/></svg>
<svg class="i" style="left:91.4px;top:50.74px" width="4.2" height="2.52" viewBox="0 0 4.2 2.52"><path d="M0 0H4.2L2.1 2.52Z" fill="#222"/></svg>
<svg class="i" style="left:91.2px;top:61px" width="4.6" height="5" viewBox="0 0 4.6 5"><path d="M0 0.5H4.6" stroke="#222" stroke-width="0.9"/><path d="M0.2 2H4.4L2.3 4.6Z" fill="#222"/></svg>
<span class="t" style="transform:scaleX(0.852);left:26px;top:71.8px;font-size:7.8px;line-height:9.8px;color:#2f7f9f;">Direct Sketch</span>
<svg class="i" style="left:91.9px;top:75.04px" width="4.2" height="2.52" viewBox="0 0 4.2 2.52"><path d="M0 0H4.2L2.1 2.52Z" fill="#222"/></svg>
<svg class="i" style="left:111px;top:33px" width="16" height="16" viewBox="0 0 16 16"><path d="M1.5 1L14 3.6V15L1.5 12Z" fill="#eef4ee" stroke="#6d7a6d" stroke-width="1"/><path d="M3 2.8L12.6 4.8V13.2L3 10.8Z" fill="#f8fbf8" stroke="#b8c8b8" stroke-width="0.5"/></svg>
<span class="t" style="transform:scaleX(0.870);left:108px;top:52.2px;font-size:8px;line-height:10px;color:#1c1c1c;">Datum</span>
<span class="t" style="transform:scaleX(0.806);left:107px;top:61.2px;font-size:8px;line-height:10px;color:#1c1c1c;">Plane</span>
<svg class="i" style="left:124.9px;top:65.04px" width="4.2" height="2.52" viewBox="0 0 4.2 2.52"><path d="M0 0H4.2L2.1 2.52Z" fill="#222"/></svg>
<svg class="i" style="left:136.5px;top:33px" width="17" height="16" viewBox="0 0 17 16"><defs><linearGradient id="ex" x1="0" y1="0" x2="1" y2="0"><stop offset="0" stop-color="#f0a23a"/><stop offset="0.5" stop-color="#fbd58f"/><stop offset="1" stop-color="#e8962c"/></linearGradient></defs><path d="M1.5 3Q8 -0.5 14 2.5V12.5Q8 16 1.5 13Z" fill="url(#ex)" stroke="#d98520" stroke-width="0.5"/><path d="M4.5 2V13.8M7.5 1.4V14.4M10.5 1.6V14" stroke="#c77512" stroke-width="0.6"/><path d="M1.5 12Q8 15.5 14 11.8" fill="none" stroke="#5b84d6" stroke-width="1"/><path d="M14 5.5H16V9.5H14Z" fill="#e0473a"/></svg>
<span class="t" style="transform:scaleX(0.816);left:134px;top:52.2px;font-size:8px;line-height:10px;color:#1c1c1c;">Extrude</span>
<svg class="i" style="left:142.9px;top:63.24px" width="4.2" height="2.52" viewBox="0 0 4.2 2.52"><path d="M0 0H4.2L2.1 2.52Z" fill="#222"/></svg>
<svg class="i" style="left:161px;top:33px" width="16" height="16" viewBox="0 0 16 16"><path d="M1 5L5 1.5H15V11L11 14.5H1Z" fill="#8ea4ea"/><path d="M1 5H11V14.5H1Z" fill="#6f8be6"/><path d="M1 5L5 1.5H15L11 5Z" fill="#b9c7f5"/><circle cx="6" cy="9.6" r="3.2" fill="#f0a02c"/><circle cx="6" cy="9.6" r="1.9" fill="#f9d14a"/></svg>
<span class="t" style="transform:scaleX(0.881);left:162px;top:52.2px;font-size:8px;line-height:10px;color:#1c1c1c;">Hole</span>
<svg class="i" style="left:182px;top:33px" width="9" height="9" viewBox="0 0 9 9"><path d="M0.5 4.8L4.5 2.2L8.5 4.8L4.5 7.4Z" fill="#f0a23a" stroke="#c87a18" stroke-width="0.4"/><path d="M2.5 4.8L4.5 3.5L6.5 4.8L4.5 6.1Z" fill="#4d6fd6"/></svg>
<span class="t" style="transform:scaleX(0.854);left:192px;top:32.9px;font-size:8px;line-height:10px;color:#1c1c1c;">Pattern Feature</span>
<svg class="i" style="left:182px;top:46.2px" width="9" height="9" viewBox="0 0 9 9"><rect x="1" y="3.5" width="5" height="5" fill="#2f9a7a"/><circle cx="5.8" cy="3.5" r="2.8" fill="#3bb08c" stroke="#1f7a5c" stroke-width="0.5"/><path d="M0.5 1.2H2.5M1.5 0.2V2.2" stroke="#d4382c" stroke-width="0.7"/></svg>
<span class="t" style="transform:scaleX(0.883);left:192px;top:46.1px;font-size:8px;line-height:10px;color:#1c1c1c;">Unite</span>
<svg class="i" style="left:212.4px;top:49.24px" width="4.2" height="2.52" viewBox="0 0 4.2 2.52"><path d="M0 0H4.2L2.1 2.52Z" fill="#222"/></svg>
<svg class="i" style="left:182px;top:58px" width="9" height="9" viewBox="0 0 9 9"><path d="M1 3L4.5 1.2V8.5L1 7Z" fill="#f0a23a"/><path d="M4.5 1.2L8.2 2.6V7.4L4.5 8.5Z" fill="#5b78d8"/><path d="M5.6 3.2L7.2 3.8V6.6L5.6 7Z" fill="#c7d2f6"/></svg>
<span class="t" style="transform:scaleX(0.815);left:192px;top:57.9px;font-size:8px;line-height:10px;color:#1c1c1c;">Shell</span>
<svg class="i" style="left:246.5px;top:33px" width="17" height="16" viewBox="0 0 17 16"><path d="M1 5.5Q1 1.5 5 1.5H16V10.5L12 14.5H1Z" fill="#6f8be6"/><path d="M1 5.5Q1 1.5 5 1.5H16L12 5.5Z" fill="#f6d9a0"/><path d="M1 5.2H12V8.2H1Z" fill="#f0a02c"/><path d="M1 8.2H12V14.5H1Z" fill="#dfe6fa"/><path d="M12 5.5L16 1.5V10.5L12 14.5Z" fill="#8ea4ea"/></svg>
<span class="t" style="transform:scaleX(0.803);left:248.5px;top:52.2px;font-size:8px;line-height:10px;color:#1c1c1c;">Edge</span>
<span class="t" style="transform:scaleX(0.806);left:244.5px;top:61.2px;font-size:8px;line-height:10px;color:#1c1c1c;">Blend</span>
<svg class="i" style="left:262.4px;top:65.04px" width="4.2" height="2.52" viewBox="0 0 4.2 2.52"><path d="M0 0H4.2L2.1 2.52Z" fill="#222"/></svg>
<svg class="i" style="left:271px;top:33px" width="9" height="9" viewBox="0 0 9 9"><path d="M0.5 3L3.5 0.8H8.5L6.5 3.4Z" fill="#6f8be6"/><path d="M0.5 3H6.5V7.5H0.5Z" fill="#f0a23a"/><path d="M6.5 3.4L8.5 0.8V5.5L6.5 7.5Z" fill="#4d6fd6"/><path d="M2.5 5.2L5.5 3.2L8 5.6L5 8.2Z" fill="#d9defa" stroke="#c44" stroke-width="0.4"/></svg>
<span class="t" style="transform:scaleX(0.864);left:281px;top:32.9px;font-size:8px;line-height:10px;color:#1c1c1c;">Chamfer</span>
<svg class="i" style="left:271px;top:46.2px" width="9" height="9" viewBox="0 0 9 9"><rect x="0.5" y="2.5" width="8" height="5" fill="#f0a23a" stroke="#5b4bb0" stroke-width="0.7"/><rect x="3.6" y="1.5" width="1.8" height="7" fill="#c9423a"/><rect x="0.9" y="2.9" width="2.2" height="4.2" fill="#dfe3fa"/></svg>
<span class="t" style="transform:scaleX(0.871);left:281px;top:46.1px;font-size:8px;line-height:10px;color:#1c1c1c;">Trim Body</span>
<svg class="i" style="left:271px;top:58px" width="9" height="9" viewBox="0 0 9 9"><path d="M4.5 0.8L8.4 5.6L4.5 7.6L0.6 5.6Z" fill="#fbeaea" stroke="#c9423a" stroke-width="0.6"/><path d="M0.6 5.6L4.5 7.6L8.4 5.6" fill="none" stroke="#5b4bb0" stroke-width="0.9"/><path d="M4.5 0.8V7.6" stroke="#c9423a" stroke-width="0.5"/></svg>
<span class="t" style="transform:scaleX(0.951);left:281px;top:57.9px;font-size:8px;line-height:10px;color:#1c1c1c;">Draft</span>
<span class="t" style="transform:scaleX(0.819);left:204.5px;top:71.8px;font-size:7.8px;line-height:9.8px;color:#2f7f9f;">Feature</span>
<div style="left:314.5px;top:33px;width:22px;height:16.5px;background:#fff;border:0.7px solid #e4e4e4;border-radius:1.5px;"></div>
<svg class="i" style="left:321px;top:37px" width="10" height="9" viewBox="0 0 10 9"><ellipse cx="5" cy="6" rx="4.6" ry="2.4" fill="#7f9be8"/><ellipse cx="5" cy="5.4" rx="3" ry="1.5" fill="#b9c7f5"/><path d="M3.8 1.2H6.2L6.6 5.4H3.4Z" fill="#f0a23a"/><circle cx="5" cy="1.6" r="1.3" fill="#f5b95a"/></svg>
<span class="t" style="transform:scaleX(0.905);left:319px;top:52.2px;font-size:8px;line-height:10px;color:#1c1c1c;">More</span>
<svg class="i" style="left:325.2px;top:63.24px" width="4.2" height="2.52" viewBox="0 0 4.2 2.52"><path d="M0 0H4.2L2.1 2.52Z" fill="#222"/></svg>
<svg class="i" style="left:330.4px;top:75.04px" width="4.2" height="2.52" viewBox="0 0 4.2 2.52"><path d="M0 0H4.2L2.1 2.52Z" fill="#222"/></svg>
<svg class="i" style="left:345.5px;top:32.5px" width="18" height="17" viewBox="0 0 18 17"><path d="M2 5L9 1.2L16 5V12L9 16L2 12Z" fill="#c7a3e4"/><path d="M2 5L9 8.5V16L2 12Z" fill="#f0a23a"/><path d="M2 5L9 1.2L16 5L9 8.5Z" fill="#dcc4f0"/><path d="M9 8.5L16 5V12L9 16Z" fill="#b58ad8"/><path d="M10 5.5V15M5.2 10.2H14.8" stroke="#777" stroke-width="1"/><path d="M10 4.5L8.6 6.4H11.4ZM10 16L8.6 14.1H11.4ZM4.2 10.2L6.1 8.8V11.6ZM15.8 10.2L13.9 8.8V11.6Z" fill="#777"/></svg>
<span class="t" style="transform:scaleX(0.869);left:346px;top:52.2px;font-size:8px;line-height:10px;color:#1c1c1c;">Move</span>
<span class="t" style="transform:scaleX(0.759);left:348px;top:61.2px;font-size:8px;line-height:10px;color:#1c1c1c;">Face</span>
<svg class="i" style="left:367px;top:33px" width="9" height="9" viewBox="0 0 9 9"><path d="M0.5 2.6L4.5 0.6L8.5 2.6V7L4.5 8.8L0.5 7Z" fill="#c79be0"/><path d="M0.5 2.6L4.5 4.4V8.8L0.5 7Z" fill="#f0a23a"/><path d="M0.5 2.6L4.5 0.6L8.5 2.6L4.5 4.4Z" fill="#f3c77a"/><path d="M5 4.6H8.4V8.6H5Z" fill="#eee" stroke="#555" stroke-width="0.5"/></svg>
<span class="t" style="transform:scaleX(0.871);left:377px;top:32.9px;font-size:8px;line-height:10px;color:#1c1c1c;">Offset Region</span>
<svg class="i" style="left:367px;top:46.2px" width="9" height="9" viewBox="0 0 9 9"><path d="M0.5 2.6L4.5 0.6L8.5 2.6V7L4.5 8.8L0.5 7Z" fill="#c79be0"/><path d="M0.5 2.6L4.5 4.4V8.8L0.5 7Z" fill="#f0a23a"/><path d="M0.5 2.6L4.5 0.6L8.5 2.6L4.5 4.4Z" fill="#f3c77a"/><path d="M5 4.6H8.4V8.6H5ZM5.8 6.6H7.6" fill="#eee" stroke="#555" stroke-width="0.5"/></svg>
<span class="t" style="transform:scaleX(0.800);left:377px;top:46.1px;font-size:8px;line-height:10px;color:#1c1c1c;">Replace Face</span>
<svg class="i" style="left:367px;top:58px" width="9" height="9" viewBox="0 0 9 9"><path d="M0.5 2.6L4.5 0.6L8.5 2.6V7L4.5 8.8L0.5 7Z" fill="#c79be0"/><path d="M0.5 2.6L4.5 4.4V8.8L0.5 7Z" fill="#f0a23a"/><path d="M0.5 2.6L4.5 0.6L8.5 2.6L4.5 4.4Z" fill="#f3c77a"/><path d="M5 5L8.4 8.6M8.4 5L5 8.6" stroke="#444" stroke-width="0.9"/></svg>
<span class="t" style="transform:scaleX(0.846);left:377px;top:57.9px;font-size:8px;line-height:10px;color:#1c1c1c;">Delete Face</span>
<div style="left:424.5px;top:33px;width:19.5px;height:16.5px;background:#fff;border:0.7px solid #e4e4e4;border-radius:1.5px;"></div>
<svg class="i" style="left:429px;top:36.5px" width="10" height="10" viewBox="0 0 10 10"><path d="M1 4.2Q3 0.8 6.4 2.4L7.2 1L8.6 4.6L4.8 4.4L5.8 3.4Q3.8 2.4 2.4 4.6Z" fill="#a04fd0"/><path d="M9 5.8Q7 9.2 3.6 7.6L2.8 9L1.4 5.4L5.2 5.6L4.2 6.6Q6.2 7.6 7.6 5.4Z" fill="#c07be6"/></svg>
<span class="t" style="transform:scaleX(0.905);left:426px;top:52.2px;font-size:8px;line-height:10px;color:#1c1c1c;">More</span>
<svg class="i" style="left:432.2px;top:63.24px" width="4.2" height="2.52" viewBox="0 0 4.2 2.52"><path d="M0 0H4.2L2.1 2.52Z" fill="#222"/></svg>
<span class="t" style="transform:scaleX(0.895);left:352.5px;top:71.8px;font-size:7.8px;line-height:9.8px;color:#2f7f9f;">Synchronous Modeling</span>
<svg class="i" style="left:437.9px;top:75.04px" width="4.2" height="2.52" viewBox="0 0 4.2 2.52"><path d="M0 0H4.2L2.1 2.52Z" fill="#222"/></svg>
<svg class="i" style="left:451.5px;top:36px" width="18" height="15" viewBox="0 0 18 15"><path d="M0.8 8Q5 1 11.5 1.2Q15.5 3.5 17.2 8.5Q11 8 6.5 14Q3 11.5 0.8 8Z" fill="#8fcfa5" stroke="#5fae7d" stroke-width="0.5"/><path d="M3 9.8Q7 3.6 13.4 2.6M5 12.4Q9 5.6 15.6 5.4M4 4.6Q6.6 7 9.4 10.6M7.4 2.2Q10.4 4.6 12.6 8.6" fill="none" stroke="#eaf6ee" stroke-width="0.7"/></svg>
<span class="t" style="transform:scaleX(0.798);left:449.5px;top:54.9px;font-size:8px;line-height:10px;color:#1c1c1c;">Surface</span>
<svg class="i" style="left:458.2px;top:66.74px" width="4.2" height="2.52" viewBox="0 0 4.2 2.52"><path d="M0 0H4.2L2.1 2.52Z" fill="#222"/></svg>
<svg class="i" style="left:486.5px;top:33.5px" width="16" height="15" viewBox="0 0 16 15"><rect x="0.6" y="0.6" width="14.8" height="13.8" fill="#f6f6f6" stroke="#d0d0d0" stroke-width="1"/><rect x="0.6" y="0.6" width="14.8" height="2" fill="#dadada"/><path d="M4 7H8V11H4ZM8 8.6H11.6V12H8ZM7 4.6L9 4.2V7" fill="none" stroke="#d0d0d0" stroke-width="0.9"/></svg>
<span class="t" style="transform:scaleX(0.877);left:481.5px;top:52.2px;font-size:8px;line-height:10px;color:#c2c2c2;">Work on</span>
<span class="t" style="transform:scaleX(0.822);left:480.5px;top:61.2px;font-size:8px;line-height:10px;color:#c2c2c2;">Assembly</span>
<svg class="i" style="left:513px;top:32.5px" width="17" height="17" viewBox="0 0 17 17"><path d="M1 3.6L4 2L7 3.6V7L4 8.6L1 7Z" fill="#f3c24a"/><path d="M1 3.6L4 5.2V8.6L1 7Z" fill="#e0a020"/><path d="M1.5 10L5 8.2L8.5 10V14L5 15.8L1.5 14Z" fill="#f3c24a"/><path d="M1.5 10L5 11.8V15.8L1.5 14Z" fill="#e0a020"/><path d="M6 9.4L8.8 8L11.6 9.4V12.6L8.8 14L6 12.6Z" fill="#f6d46c"/><path d="M6 9.4L8.8 10.8V14L6 12.6Z" fill="#e4aa2c"/><path d="M12.6 1V6.6M9.8 3.8H15.4" stroke="#2f6fe0" stroke-width="1.3"/></svg>
<span class="t" style="transform:scaleX(0.913);left:514.5px;top:52.2px;font-size:8px;line-height:10px;color:#1c1c1c;">Add</span>
<svg class="i" style="left:519.2px;top:63.24px" width="4.2" height="2.52" viewBox="0 0 4.2 2.52"><path d="M0 0H4.2L2.1 2.52Z" fill="#222"/></svg>
<svg class="i" style="left:534px;top:33px" width="9" height="9" viewBox="0 0 9 9"><rect x="0.8" y="5.2" width="3" height="3" fill="#f3c24a" stroke="#b58410" stroke-width="0.4"/><path d="M2 0.8V3.4M6.6 0.8V3.4M2 2H6.6" stroke="#3a47b8" stroke-width="0.9"/><path d="M3 4L8.2 8.6H4.4Z" fill="#d4382c"/></svg>
<span class="t" style="transform:scaleX(0.860);left:544px;top:32.9px;font-size:8px;line-height:10px;color:#1c1c1c;">Assembly Constraints</span>
<svg class="i" style="left:534px;top:46.2px" width="9" height="9" viewBox="0 0 9 9"><path d="M0.8 2.8L4.5 0.8L8.2 2.8V6.6L4.5 8.6L0.8 6.6Z" fill="#f3c24a" stroke="#c99414" stroke-width="0.4"/><path d="M4.8 2.4V8.2M1.8 5.3H7.8" stroke="#555" stroke-width="0.8"/><circle cx="4.8" cy="5.3" r="1.9" fill="none" stroke="#555" stroke-width="0.6"/></svg>
<span class="t" style="transform:scaleX(0.895);left:544px;top:46.1px;font-size:8px;line-height:10px;color:#1c1c1c;">Move Component</span>
<svg class="i" style="left:534px;top:58px" width="9" height="9" viewBox="0 0 9 9"><path d="M0.6 5.4L5.6 3.4L7.6 4.6V6.8L2.6 8.6L0.6 7.4Z" fill="#f3c24a"/><path d="M0.6 5.4L5.6 3.4L7.6 4.6L2.6 6.6Z" fill="#f9dd8a"/><path d="M7.2 0.4V2.8M6 1.6H8.4" stroke="#2f6fe0" stroke-width="0.7"/></svg>
<span class="t" style="transform:scaleX(0.886);left:544px;top:57.9px;font-size:8px;line-height:10px;color:#1c1c1c;">Pattern Component</span>
<span class="t" style="transform:scaleX(0.828);left:523.5px;top:71.8px;font-size:7.8px;line-height:9.8px;color:#2f7f9f;">Assemblies</span>
<svg class="i" style="left:605.9px;top:75.04px" width="4.2" height="2.52" viewBox="0 0 4.2 2.52"><path d="M0 0H4.2L2.1 2.52Z" fill="#222"/></svg>
<svg class="i" style="left:951.9px;top:75.04px" width="4.2" height="2.52" viewBox="0 0 4.2 2.52"><path d="M0 0H4.2L2.1 2.52Z" fill="#222"/></svg>
<div style="left:0px;top:81.3px;width:960px;height:17.7px;background:#ffffff;"></div>
<div style="left:0px;top:98.6px;width:960px;height:1px;background:#dcdcdc;"></div>
<svg class="i" style="left:5px;top:85.5px" width="9" height="9" viewBox="0 0 9 9"><rect x="1.6" y="1.6" width="6.8" height="6.4" fill="#f3f3f3" stroke="#555" stroke-width="0.7"/><path d="M2.8 3.4H7M2.8 5H7M2.8 6.6H7" stroke="#777" stroke-width="0.6"/><rect x="0.3" y="0.5" width="3.4" height="2.4" fill="#5c6fc0"/></svg>
<span class="t" style="transform:scaleX(0.824);left:15px;top:86.7px;font-size:8px;line-height:10px;color:#1c1c1c;"><u>M</u>enu</span>
<svg class="i" style="left:34.3px;top:90px" width="4" height="2.4" viewBox="0 0 4 2.4"><path d="M0 0H4L2 2.4Z" fill="#222"/></svg>
<div style="left:48px;top:85.1px;width:78.5px;height:11.6px;background:#fff;border:0.7px solid #bdbdbd;"></div>
<span class="t" style="transform:scaleX(0.849);left:51px;top:86.9px;font-size:8px;line-height:10px;color:#1c1c1c;">No Selection Filter</span>
<svg class="i" style="left:118.1px;top:89.88px" width="4.4" height="2.64" viewBox="0 0 4.4 2.64"><path d="M0 0H4.4L2.2 2.64Z" fill="#222"/></svg>
<div style="left:131px;top:85.1px;width:82.5px;height:11.6px;background:#fff;border:0.7px solid #bdbdbd;"></div>
<div style="left:40.8px;top:84.8px;width:0.8px;height:12px;background:#dcdcdc;"></div>
<span class="t" style="transform:scaleX(0.846);left:134px;top:86.9px;font-size:8px;line-height:10px;color:#1c1c1c;">Entire Assembly</span>
<svg class="i" style="left:205.1px;top:89.88px" width="4.4" height="2.64" viewBox="0 0 4.4 2.64"><path d="M0 0H4.4L2.2 2.64Z" fill="#222"/></svg>
<svg class="i" style="left:217px;top:86px" width="9" height="9" viewBox="0 0 9 9"><path d="M4.5 0.5V8.5M1 2.5H8M2.4 2.5V5.5M6.6 2.5V5.5" stroke="#bfbfbf" stroke-width="0.9" fill="none"/><circle cx="2.4" cy="6.2" r="1" fill="#bfbfbf"/><circle cx="6.6" cy="6.2" r="1" fill="#bfbfbf"/></svg>
<svg class="i" style="left:229px;top:86.5px" width="8" height="8" viewBox="0 0 8 8"><path d="M1 1L3.4 3.4M3.4 1L1 3.4M5 4V7.4M3.4 5.6H6.8" stroke="#bfbfbf" stroke-width="0.8"/></svg>
<svg class="i" style="left:241px;top:85.5px" width="9" height="10" viewBox="0 0 9 10"><rect x="0.6" y="0.6" width="7.8" height="8.4" fill="#fff" stroke="#cf3a34" stroke-width="1"/><path d="M2.4 2L4 4L2.4 4.6Z M4.8 4.4L6.6 6.6L4.4 6.4Z" fill="#444"/><path d="M3.6 1.6l0.5 1l1 0.2l-0.8 0.6l0.2 1l-0.9-0.6l-0.9 0.6l0.2-1l-0.8-0.6l1-0.2z" fill="#f2b52a"/></svg>
<svg class="i" style="left:252.4px;top:89.46px" width="3.8" height="2.28" viewBox="0 0 3.8 2.28"><path d="M0 0H3.8L1.9 2.28Z" fill="#222"/></svg>
<svg class="i" style="left:260px;top:86px" width="9" height="9" viewBox="0 0 9 9"><path d="M2 2Q5 0.4 5.6 3.4L5.4 7.6" fill="none" stroke="#bfbfbf" stroke-width="1"/><path d="M4 6.2L5.4 8.6L7 6.2Z" fill="#bfbfbf"/></svg>
<svg class="i" style="left:272px;top:86px" width="9" height="9" viewBox="0 0 9 9"><path d="M1 2H4.4Q6 2 6 4V8M2.6 3.6H4.4" fill="none" stroke="#bfbfbf" stroke-width="1"/><path d="M6.2 4.4L8.2 7.6H5Z" fill="#bfbfbf"/></svg>
<svg class="i" style="left:285px;top:86px" width="9" height="9" viewBox="0 0 9 9"><path d="M1 3L4 1.4L7 3V6.4L4 8L1 6.4Z" fill="#f4f4f4" stroke="#aaa" stroke-width="0.7"/><path d="M4 4.6V8M1 3L4 4.6L7 3" fill="none" stroke="#aaa" stroke-width="0.6"/><circle cx="7" cy="6.6" r="1.6" fill="#d26a5c"/></svg>
<svg class="i" style="left:296.5px;top:86px" width="10" height="9" viewBox="0 0 10 9"><rect x="1" y="1" width="8" height="7" fill="none" stroke="#c44a40" stroke-width="0.9" stroke-dasharray="1.6 1"/></svg>
<svg class="i" style="left:309.4px;top:89.46px" width="3.8" height="2.28" viewBox="0 0 3.8 2.28"><path d="M0 0H3.8L1.9 2.28Z" fill="#222"/></svg>
<div style="left:318px;top:84px;width:22px;height:13px;background:#cde3ee;"></div>
<svg class="i" style="left:319.5px;top:86.5px" width="9" height="8" viewBox="0 0 9 8"><ellipse cx="4.5" cy="4.4" rx="4.2" ry="3" fill="#f1f1f1" stroke="#666" stroke-width="0.7"/><ellipse cx="3.6" cy="4.8" rx="1.7" ry="1.5" fill="#c9505a"/><ellipse cx="6.2" cy="3.8" rx="1.4" ry="1.2" fill="#8d8d8d"/></svg>
<svg class="i" style="left:330px;top:85.5px" width="9" height="10" viewBox="0 0 9 10"><path d="M1 3L4.5 1L8 3V7L4.5 9L1 7Z" fill="#3f8be0"/><path d="M1 3L4.5 1L8 3L4.5 5Z" fill="#9ccaf6"/><path d="M4.5 5L8 3V7L4.5 9Z" fill="#2a6cc4"/></svg>
<div style="left:341.5px;top:84px;width:22.5px;height:13px;background:#cde3ee;"></div>
<svg class="i" style="left:343px;top:86px" width="9" height="9" viewBox="0 0 9 9"><path d="M1 1L8 8M8 1L1 8M4.5 0.6V8.4M0.6 4.5H8.4" stroke="#2e8a3c" stroke-width="0.9"/><circle cx="4.5" cy="4.5" r="1.4" fill="#f0c330"/></svg>
<svg class="i" style="left:354px;top:86px" width="9" height="9" viewBox="0 0 9 9"><path d="M1 8L8 1" stroke="#333" stroke-width="1"/><circle cx="8" cy="1.2" r="0.9" fill="#d4382c"/></svg>
<div style="left:365px;top:84px;width:12.5px;height:13px;background:#cde3ee;"></div>
<svg class="i" style="left:366.5px;top:86px" width="9" height="9" viewBox="0 0 9 9"><path d="M1 8L8 1" stroke="#333" stroke-width="1"/><circle cx="4.5" cy="4.5" r="1" fill="#d4382c"/></svg>
<svg class="i" style="left:379px;top:85.5px" width="7" height="10" viewBox="0 0 7 10"><path d="M1 1Q3.6 1 3.4 4.6Q3.2 8.6 6 8.6" fill="none" stroke="#333" stroke-width="1"/><circle cx="3.4" cy="4.8" r="0.9" fill="#d4382c"/></svg>
<div style="left:391px;top:84px;width:23px;height:13px;background:#cde3ee;"></div>
<svg class="i" style="left:392.5px;top:86px" width="10" height="9" viewBox="0 0 10 9"><path d="M0.6 6L3 2.6L5 7.4L7 3.4L9.4 5" fill="none" stroke="#3e3ea0" stroke-width="1"/><circle cx="3" cy="2.6" r="0.9" fill="#d4382c"/><circle cx="5" cy="7.4" r="0.9" fill="#d4382c"/><circle cx="7" cy="3.4" r="0.9" fill="#d4382c"/></svg>
<svg class="i" style="left:403.5px;top:86px" width="10" height="9" viewBox="0 0 10 9"><path d="M0.6 6Q2.6 1 5 4.6Q7 7.6 9.4 3" fill="none" stroke="#3e3ea0" stroke-width="1.1"/><circle cx="0.9" cy="6" r="0.9" fill="#d4382c"/><circle cx="9.2" cy="3" r="0.9" fill="#d4382c"/></svg>
<svg class="i" style="left:416.5px;top:86.5px" width="9" height="8" viewBox="0 0 9 8"><path d="M4.5 0.6V7.4M0.8 6Q4.5 2 8.2 6" fill="none" stroke="#333" stroke-width="0.9"/></svg>
<div style="left:427.5px;top:84px;width:12.5px;height:13px;background:#cde3ee;"></div>
<svg class="i" style="left:428.5px;top:85.5px" width="11" height="11" viewBox="0 0 11 11"><circle cx="5.3" cy="5.2" r="4.3" fill="none" stroke="#333" stroke-width="1"/><circle cx="5.3" cy="5.2" r="1.1" fill="#d4382c"/></svg>
<svg class="i" style="left:442px;top:85.5px" width="11" height="11" viewBox="0 0 11 11"><circle cx="5.3" cy="5.2" r="3.6" fill="none" stroke="#d4382c" stroke-width="1"/><path d="M5.3 0.4V2.4M5.3 8V10M0.5 5.2H2.5M8.1 5.2H10.1" stroke="#d4382c" stroke-width="0.9"/></svg>
<div style="left:454px;top:84px;width:23.5px;height:13px;background:#cde3ee;"></div>
<svg class="i" style="left:455.5px;top:86px" width="9" height="9" viewBox="0 0 9 9"><path d="M4.5 0.8V8.2M0.8 4.5H8.2" stroke="#222" stroke-width="1"/></svg>
<svg class="i" style="left:467px;top:86px" width="9" height="9" viewBox="0 0 9 9"><path d="M1 8L8 1" stroke="#333" stroke-width="1"/><circle cx="1.4" cy="7.8" r="1" fill="#d4382c"/></svg>
<svg class="i" style="left:479px;top:86px" width="9" height="9" viewBox="0 0 9 9"><path d="M1.4 1.6Q6.6 0.2 7.4 4.4Q5 8.2 1.4 6.4Z" fill="#dfe6f6" stroke="#7f8fc0" stroke-width="0.7"/><circle cx="5.6" cy="2.6" r="1" fill="#d4382c"/></svg>
<svg class="i" style="left:491.5px;top:86px" width="10" height="9" viewBox="0 0 10 9"><path d="M0.6 4.6L5 1.6L9.4 4.6L5 7.8Z" fill="#4a3f9a"/><path d="M2.4 4.6L5 2.8L7.6 4.6L5 6.4Z" fill="#c9505a"/></svg>
<svg class="i" style="left:503px;top:86px" width="9" height="9" viewBox="0 0 9 9"><path d="M1 1.6L5 0.8V7.2L1 8.2Z" fill="#9a9a9a"/><path d="M5 2.4L8 3V8.4L5 7.2Z" fill="#c9706a"/></svg>
<div style="left:517px;top:84.5px;width:0.8px;height:12px;background:#d4d4d4;"></div>
<svg class="i" style="left:521px;top:85.5px" width="10" height="10" viewBox="0 0 10 10"><rect x="0.6" y="0.8" width="8.8" height="7.6" fill="#fff" stroke="#3a47b8" stroke-width="0.9"/><rect x="0.6" y="0.8" width="8.8" height="1.6" fill="#3a47b8"/><circle cx="5" cy="5.4" r="1.9" fill="none" stroke="#777" stroke-width="0.8"/><path d="M6.4 6.8L8.6 9" stroke="#777" stroke-width="1"/></svg>
<svg class="i" style="left:535.5px;top:86px" width="10" height="9" viewBox="0 0 10 9"><rect x="0.6" y="0.8" width="8.8" height="7" fill="#f6f6f6" stroke="#9a9ab0" stroke-width="0.8"/><rect x="4.6" y="3.6" width="3.6" height="3" fill="#e8b64a"/></svg>
<svg class="i" style="left:549px;top:86px" width="10" height="9" viewBox="0 0 10 9"><path d="M1.6 5.4A3.4 3.4 0 0 1 7.8 2.8" fill="none" stroke="#3a47b8" stroke-width="1"/><path d="M8.4 3.6A3.4 3.4 0 0 1 2.2 6.4" fill="none" stroke="#666" stroke-width="1"/></svg>
<div style="left:561.5px;top:84px;width:11.5px;height:13px;background:#cde3ee;"></div>
<svg class="i" style="left:562.5px;top:86px" width="10" height="9" viewBox="0 0 10 9"><path d="M1.2 7.8L7 2.6" stroke="#3a47b8" stroke-width="1.5"/><circle cx="2" cy="7.2" r="1.5" fill="#3a47b8"/><path d="M7 0.8L8.8 2.4L7.4 3.6Z" fill="#d4382c"/></svg>
<svg class="i" style="left:573.5px;top:85.5px" width="10" height="10" viewBox="0 0 10 10"><rect x="0.8" y="0.6" width="3.8" height="5.6" fill="#eef" stroke="#5a66b8" stroke-width="0.7"/><path d="M5.6 3.2V8.8M3.6 6.4H8.2" stroke="#d4382c" stroke-width="0.9"/><path d="M5.8 6.6Q7.6 6.4 8.8 4.6" stroke="#d4382c" stroke-width="0.8" fill="none"/></svg>
<svg class="i" style="left:585px;top:85.5px" width="11" height="10" viewBox="0 0 11 10"><rect x="0.6" y="0.6" width="9.4" height="8.4" fill="#fff" stroke="#3a47b8" stroke-width="0.9"/><rect x="0.6" y="0.6" width="9.4" height="2" fill="#3a47b8"/><rect x="2.2" y="3.6" width="1.8" height="4.4" fill="#d4382c"/><rect x="4.4" y="3.6" width="1.8" height="4.4" fill="#d4382c"/><rect x="6.6" y="3.6" width="1.8" height="4.4" fill="#d4382c"/></svg>
<svg class="i" style="left:598.4px;top:89.46px" width="3.8" height="2.28" viewBox="0 0 3.8 2.28"><path d="M0 0H3.8L1.9 2.28Z" fill="#222"/></svg>
<svg class="i" style="left:605.5px;top:85.5px" width="10" height="10" viewBox="0 0 10 10"><path d="M1 1H7.4L8.4 2V9H1Z" fill="#8a8a8a" stroke="#444" stroke-width="0.8"/><path d="M2 2H6.6V8H2Z" fill="#bdbdbd"/></svg>
<svg class="i" style="left:618.4px;top:89.46px" width="3.8" height="2.28" viewBox="0 0 3.8 2.28"><path d="M0 0H3.8L1.9 2.28Z" fill="#222"/></svg>
<svg class="i" style="left:626px;top:86px" width="10" height="9" viewBox="0 0 10 9"><defs><radialGradient id="sg" cx="0.4" cy="0.35" r="0.7"><stop offset="0" stop-color="#f6f0b0"/><stop offset="0.6" stop-color="#b9b95a"/><stop offset="1" stop-color="#6f7f4a"/></radialGradient></defs><circle cx="5" cy="4.5" r="4" fill="url(#sg)"/><ellipse cx="5" cy="6.4" rx="3.4" ry="1.4" fill="#5f8a6a" opacity="0.6"/></svg>
<svg class="i" style="left:639.4px;top:89.46px" width="3.8" height="2.28" viewBox="0 0 3.8 2.28"><path d="M0 0H3.8L1.9 2.28Z" fill="#222"/></svg>
<svg class="i" style="left:645px;top:86px" width="11" height="9" viewBox="0 0 11 9"><path d="M1.4 0.8V8.2" stroke="#2e8a3c" stroke-width="1.1"/><path d="M3 2L5.6 4.5L3 7Z" fill="#d4382c"/><circle cx="7.6" cy="4.5" r="2.2" fill="none" stroke="#3a47b8" stroke-width="0.9"/></svg>
<svg class="i" style="left:658.4px;top:89.46px" width="3.8" height="2.28" viewBox="0 0 3.8 2.28"><path d="M0 0H3.8L1.9 2.28Z" fill="#222"/></svg>
<div style="left:668px;top:84.5px;width:0.8px;height:12px;background:#d4d4d4;"></div>
<svg class="i" style="left:952px;top:92.3px" width="4" height="2.4" viewBox="0 0 4 2.4"><path d="M0 0H4L2 2.4Z" fill="#222"/></svg>
<div style="left:0px;top:99.6px;width:199.5px;height:398px;background:#ffffff;"></div>
<div style="left:0px;top:99.6px;width:15.6px;height:398px;background:#d6d6d6;"></div>
<div style="left:15.6px;top:99.6px;width:0.8px;height:398px;background:#c2c2c2;"></div>
<div style="left:19.3px;top:127.2px;width:174.6px;height:170px;background:#f0f0f0;"></div>
<div style="left:19.8px;top:127.2px;width:163.5px;height:159px;background:#ffffff;"></div>
<div style="left:19.3px;top:297.2px;width:174.6px;height:2.8px;background:#c9c9c9;"></div>
<svg class="i" style="left:4px;top:102.5px" width="8" height="8" viewBox="0 0 10 10"><circle cx="5" cy="5" r="2.9" fill="none" stroke="#444" stroke-width="1.5"/><circle cx="5" cy="5" r="4.2" fill="none" stroke="#444" stroke-width="1.3" stroke-dasharray="1.4 1.9"/></svg>
<div style="left:0px;top:161.5px;width:16.4px;height:22px;background:#ffffff;"></div>
<svg class="i" style="left:2.6px;top:124.8px" width="11.18" height="11.18" viewBox="0 0 13 13"><path d="M1 2H6V6H1Z" fill="#f3c24a"/><path d="M3 6V10H8" fill="none" stroke="#555" stroke-width="0.8"/><path d="M7 8H12V12H7Z" fill="#f0b030"/><path d="M5 4H10V7H5Z" fill="#f7d77a"/></svg>
<svg class="i" style="left:2.6px;top:146.8px" width="11.18" height="12.04" viewBox="0 0 13 14"><path d="M1 2L6 6L1 10Z" fill="#3a47b8"/><path d="M12 2L7 6L12 10Z" fill="#3a47b8"/><path d="M1 10H12V13.5H1Z" fill="#d4382c"/><path d="M6 11L8 13H4Z" fill="#f3e24a"/></svg>
<svg class="i" style="left:2.6px;top:166.8px" width="11.18" height="12.04" viewBox="0 0 13 14"><rect x="1" y="1" width="4" height="3.6" fill="#c05ac8"/><path d="M3 4.6V11H8M3 7.4H7" fill="none" stroke="#555" stroke-width="0.9"/><rect x="7" y="5.6" width="4" height="3.2" fill="#4a8ad8"/><circle cx="9.8" cy="11" r="2" fill="none" stroke="#c05ac8" stroke-width="1.1"/></svg>
<svg class="i" style="left:2.6px;top:187.8px" width="12.04" height="12.04" viewBox="0 0 14 14"><path d="M1 4L3 2V12L1 13Z" fill="#d4382c"/><path d="M3.4 3L5.4 1.6V12L3.4 13Z" fill="#f39a2a"/><path d="M5.8 3L7.8 1.6V12L5.8 13Z" fill="#f3d82a"/><path d="M8.2 3L10.2 1.6V12L8.2 13Z" fill="#3aa84a"/><path d="M10.6 3L12.6 1.6V12L10.6 13Z" fill="#3a67d8"/></svg>
<svg class="i" style="left:2.6px;top:212.8px" width="11.18" height="12.9" viewBox="0 0 13 15"><circle cx="5" cy="4" r="2.2" fill="#2f7fe0"/><path d="M3 7.4H7V13.6H3Z" fill="#2f7fe0"/><path d="M8 2.2Q10.6 4.6 8 7.2M10 0.8Q13.6 4.6 10 8.6" fill="none" stroke="#2f7fe0" stroke-width="1"/></svg>
<svg class="i" style="left:2.6px;top:240.8px" width="11.18" height="12.04" viewBox="0 0 13 14"><rect x="0.8" y="0.8" width="11" height="12" fill="#e9f1fb" stroke="#4a8ad8" stroke-width="1"/><circle cx="6.4" cy="7" r="3" fill="#3aa85a"/><path d="M5 7H7.8M6.4 5.6V8.4" stroke="#fff" stroke-width="0.9"/></svg>
<svg class="i" style="left:2.6px;top:267.8px" width="12.04" height="12.04" viewBox="0 0 14 14"><circle cx="6.6" cy="7" r="5.6" fill="#f4f4f8" stroke="#7a7a9a" stroke-width="1.1"/><path d="M6.6 3.4V7.2H9.6" fill="none" stroke="#3a47b8" stroke-width="1.1"/></svg>
<svg class="i" style="left:2.6px;top:290.8px" width="11.18" height="11.18" viewBox="0 0 13 13"><path d="M1 12V8L4 1H8L9 8V12Z" fill="#3a47b8"/><path d="M2 11L4.4 2H7.2L4 11Z" fill="#f3d82a"/><path d="M3 11L6 4L7.6 11Z" fill="#d4382c"/><path d="M8 3L12 12" stroke="#222" stroke-width="1.2"/></svg>
<svg class="i" style="left:2.6px;top:310.8px" width="11.18" height="10.32" viewBox="0 0 13 12"><path d="M1 1V11M1 6L6 1M1 6L6 11" stroke="#2f5fb0" stroke-width="1.5" fill="none"/><path d="M7 2L12 10" stroke="#555" stroke-width="1"/><circle cx="9" cy="3" r="1.4" fill="#3a8ad8"/></svg>
<svg class="i" style="left:2.6px;top:330.8px" width="11.18" height="12.04" viewBox="0 0 13 14"><path d="M2 9L6 6L10 9L6 12Z" fill="#777"/><path d="M4 5L7 3L10 5L7 7Z" fill="#999"/><circle cx="5" cy="2.6" r="1.6" fill="#888"/><path d="M8 9L11 8V12L8 13Z" fill="#555"/></svg>
<svg class="i" style="left:2.6px;top:351.8px" width="11.18" height="11.18" viewBox="0 0 13 13"><rect x="1.6" y="1" width="10" height="11" fill="#f6f6f6" stroke="#666" stroke-width="0.9"/><rect x="4" y="3.6" width="5" height="4.4" fill="#d4382c"/><rect x="5" y="4.6" width="3" height="2" fill="#3a47b8"/></svg>
<svg class="i" style="left:2.6px;top:373.8px" width="11.18" height="11.18" viewBox="0 0 13 13"><path d="M1 10Q2 5 5 6L6 10Z" fill="#6a9a4a"/><circle cx="9.4" cy="3.2" r="2.2" fill="#4ab84a"/><path d="M9.4 5.4V11" stroke="#555" stroke-width="1"/><path d="M2 11H7" stroke="#555" stroke-width="1"/></svg>
<svg class="i" style="left:2.6px;top:394.8px" width="11.18" height="11.18" viewBox="0 0 13 13"><rect x="1.6" y="1" width="10" height="11" fill="#f6f6f6" stroke="#666" stroke-width="0.9"/><path d="M4 4H6M4 6.4H6M4 8.8H6" stroke="#3a47b8" stroke-width="1.2"/><path d="M7 4H10M7 6.4H10M7 8.8H10" stroke="#c9a42a" stroke-width="1"/></svg>
<span class="t" style="transform:scaleX(0.919);left:21.5px;top:103.3px;font-size:8px;line-height:10px;color:#1c1c1c;">Part Navigator</span>
<svg class="i" style="left:183px;top:103.5px" width="8.5" height="8.5" viewBox="0 0 8.5 8.5"><rect x="0.6" y="0.6" width="7" height="7" fill="#fff" stroke="#222" stroke-width="0.9"/><path d="M0.6 1H7.6" stroke="#222" stroke-width="1.2"/></svg>
<div style="left:19.3px;top:115.5px;width:174.6px;height:11.7px;background:#f0f0f0;border-top:0.6px solid #dcdcdc;border-bottom:0.6px solid #dcdcdc;"></div>
<span class="t" style="transform:scaleX(0.913);left:23px;top:117.5px;font-size:7.8px;line-height:9.8px;color:#1c1c1c;">Name</span>
<svg class="i" style="left:51.5px;top:120px" width="5" height="3.4" viewBox="0 0 5 3.4"><path d="M0.2 3.2L2.5 0.2L4.8 3.2Z" fill="#222"/></svg>
<span class="t" style="transform:scaleX(0.992);left:122.5px;top:117.5px;font-size:7.8px;line-height:9.8px;color:#1c1c1c;">Up to Date</span>
<div style="left:172.5px;top:116px;width:21px;height:11px;overflow:hidden;"><span class="t" style="left:0.5px;top:0.6px;font-size:7.8px;line-height:10px;color:#1c1c1c;transform:scaleX(0.9)">Comments</span></div>
<div style="left:119.5px;top:115.5px;width:0.7px;height:170.5px;background:#e4e4e4;"></div>
<div style="left:170px;top:115.5px;width:0.7px;height:170.5px;background:#e4e4e4;"></div>
<div style="left:19.8px;top:139.1px;width:163.5px;height:0.5px;background:#f0f0f0;"></div>
<div style="left:19.8px;top:151.2px;width:163.5px;height:0.5px;background:#f0f0f0;"></div>
<div style="left:19.8px;top:163.3px;width:163.5px;height:0.5px;background:#f0f0f0;"></div>
<div style="left:19.8px;top:175.4px;width:163.5px;height:0.5px;background:#f0f0f0;"></div>
<div style="left:19.8px;top:187.5px;width:163.5px;height:0.5px;background:#f0f0f0;"></div>
<div style="left:19.8px;top:187.65px;width:163.5px;height:12.1px;background:#f7f7f7;"></div>
<div style="left:19.8px;top:199.6px;width:163.5px;height:0.5px;background:#f0f0f0;"></div>
<div style="left:19.8px;top:211.7px;width:163.5px;height:0.5px;background:#f0f0f0;"></div>
<div style="left:19.8px;top:211.85px;width:163.5px;height:12.1px;background:#f7f7f7;"></div>
<div style="left:19.8px;top:223.8px;width:163.5px;height:0.5px;background:#f0f0f0;"></div>
<div style="left:19.8px;top:235.9px;width:163.5px;height:0.5px;background:#f0f0f0;"></div>
<div style="left:19.8px;top:236.05px;width:163.5px;height:12.1px;background:#f7f7f7;"></div>
<div style="left:19.8px;top:248px;width:163.5px;height:0.5px;background:#f0f0f0;"></div>
<div style="left:19.8px;top:260.1px;width:163.5px;height:0.5px;background:#f0f0f0;"></div>
<div style="left:19.8px;top:260.25px;width:163.5px;height:12.1px;background:#f7f7f7;"></div>
<div style="left:19.8px;top:272.2px;width:163.5px;height:0.5px;background:#f0f0f0;"></div>
<div style="left:19.8px;top:284.3px;width:163.5px;height:0.5px;background:#f0f0f0;"></div>
<div style="left:24.2px;top:136px;width:0.6px;height:42px;background:#dcdcdc;"></div>
<div style="left:36.8px;top:127.3px;width:146.3px;height:12px;background:#fff;border:0.8px solid #7a7a7a;"></div>
<svg class="i" style="left:22.3px;top:131px" width="4.4" height="4.4" viewBox="0 0 4.4 4.4"><path d="M0.4 2.2H4M2.2 0.4V4" stroke="#666" stroke-width="0.7"/></svg>
<svg class="i" style="left:28.8px;top:128.7px" width="9" height="9" viewBox="0 0 9 9"><circle cx="4.5" cy="4.5" r="3.6" fill="#e8f6ea" stroke="#2e9a4a" stroke-width="0.9"/><path d="M4.5 1V8M1 4.5H8" stroke="#2e9a4a" stroke-width="0.7"/><rect x="3.2" y="3.2" width="2.6" height="2.6" fill="#2e9a4a"/></svg>
<span class="t" style="transform:scaleX(0.951);left:39px;top:128.6px;font-size:8px;line-height:10px;color:#1c1c1c;">Model Views</span>
<svg class="i" style="left:22.3px;top:143.1px" width="4.4" height="4.4" viewBox="0 0 4.4 4.4"><path d="M0.4 2.2H4M2.2 0.4V4" stroke="#666" stroke-width="0.7"/></svg>
<svg class="i" style="left:30px;top:141.8px" width="7" height="7" viewBox="0 0 7 7"><path d="M0.8 3.6L2.8 5.8L6.4 0.9" fill="none" stroke="#27a844" stroke-width="1.5"/></svg>
<svg class="i" style="left:37.5px;top:140.8px" width="9" height="9" viewBox="0 0 9 9"><path d="M1 3H6V7.6H1Z" fill="#c9423a"/><path d="M6 4.6L8.4 3.2V7.4L6 6Z" fill="#8a8a8a"/><circle cx="2.6" cy="2" r="1.4" fill="#e07a6a"/><circle cx="5.2" cy="2" r="1.2" fill="#e07a6a"/></svg>
<span class="t" style="transform:scaleX(0.863);left:47.5px;top:140.7px;font-size:8px;line-height:10px;color:#1c1c1c;">Cameras</span>
<svg class="i" style="left:28.8px;top:152.9px" width="9" height="9" viewBox="0 0 9 9"><path d="M0.5 2H3L3.8 3H7.5V7.5H0.5Z" fill="#e9b84a" stroke="#b98a1e" stroke-width="0.4"/><path d="M0.5 7.5L1.8 4H8.6L7.5 7.5Z" fill="#f8dc8a" stroke="#b98a1e" stroke-width="0.4"/><path d="M5 0.6H8M6.5 0.6V3" stroke="#d4382c" stroke-width="0.7"/></svg>
<span class="t" style="transform:scaleX(0.869);left:39px;top:152.8px;font-size:8px;line-height:10px;color:#1c1c1c;">User Expressions</span>
<svg class="i" style="left:28.8px;top:165px" width="9" height="9" viewBox="0 0 9 9"><path d="M0.5 2H3L3.8 3H7.5V7.5H0.5Z" fill="#e9b84a" stroke="#b98a1e" stroke-width="0.4"/><path d="M0.5 7.5L1.8 4H8.6L7.5 7.5Z" fill="#f8dc8a" stroke="#b98a1e" stroke-width="0.4"/></svg>
<span class="t" style="transform:scaleX(0.936);left:39px;top:164.9px;font-size:8px;line-height:10px;color:#1c1c1c;">Non-timestamp Geom...</span>
<svg class="i" style="left:22.3px;top:179.4px" width="4.4" height="4.4" viewBox="0 0 4.4 4.4"><path d="M0.4 2.2H4" stroke="#666" stroke-width="0.7"/></svg>
<svg class="i" style="left:28.8px;top:177.1px" width="9" height="9" viewBox="0 0 9 9"><path d="M0.5 2H3L3.8 3H7.5V7.5H0.5Z" fill="#e9b84a" stroke="#b98a1e" stroke-width="0.4"/><path d="M0.5 7.5L1.8 4H8.6L7.5 7.5Z" fill="#f8dc8a" stroke="#b98a1e" stroke-width="0.4"/></svg>
<span class="t" style="transform:scaleX(0.971);left:39px;top:177px;font-size:8px;line-height:10px;color:#1c1c1c;">Model History</span>
<svg class="i" style="left:40px;top:190.2px" width="7" height="7" viewBox="0 0 7 7"><rect x="0.5" y="0.5" width="6" height="6" fill="#fff" stroke="#2d2d2d" stroke-width="0.9"/><path d="M1.6 3.4L3 5L5.6 1.6" fill="none" stroke="#1f9a3c" stroke-width="1.2"/></svg>
<svg class="i" style="left:47px;top:189.2px" width="9" height="9" viewBox="0 0 9 9"><path d="M1 7.6V1.6M1 7.6H7.6M1 7.6L5.6 3" stroke="#4a4a9a" stroke-width="0.9"/><path d="M3 1L7 2L5 5Z" fill="none" stroke="#6a4ab0" stroke-width="0.6"/></svg>
<span class="t" style="transform:scaleX(0.924);left:56.5px;top:189.1px;font-size:8px;line-height:10px;color:#1c1c1c;">Datum Coordina...</span>
<svg class="i" style="left:122.5px;top:190.2px" width="7" height="7" viewBox="0 0 7 7"><path d="M0.8 3.6L2.8 5.8L6.4 0.9" fill="none" stroke="#27a844" stroke-width="1.5"/></svg>
<svg class="i" style="left:40px;top:202.3px" width="7" height="7" viewBox="0 0 7 7"><rect x="0.5" y="0.5" width="6" height="6" fill="#fff" stroke="#2d2d2d" stroke-width="0.9"/><path d="M1.6 3.4L3 5L5.6 1.6" fill="none" stroke="#1f9a3c" stroke-width="1.2"/></svg>
<svg class="i" style="left:47px;top:201.3px" width="9" height="9" viewBox="0 0 9 9"><rect x="0.8" y="0.8" width="4" height="3.2" fill="none" stroke="#222" stroke-width="0.9"/><rect x="0.8" y="5" width="6.6" height="3" fill="none" stroke="#222" stroke-width="0.9"/><path d="M6 0.6L8.4 3.2" stroke="#d4382c" stroke-width="1"/></svg>
<span class="t" style="transform:scaleX(0.865);left:56.5px;top:201.2px;font-size:8px;line-height:10px;color:#9c9c9c;">Sketch (1) "SKET...</span>
<svg class="i" style="left:122.5px;top:202.3px" width="7" height="7" viewBox="0 0 7 7"><path d="M0.8 3.6L2.8 5.8L6.4 0.9" fill="none" stroke="#27a844" stroke-width="1.5"/></svg>
<svg class="i" style="left:40px;top:214.4px" width="7" height="7" viewBox="0 0 7 7"><rect x="0.5" y="0.5" width="6" height="6" fill="#fff" stroke="#2d2d2d" stroke-width="0.9"/><path d="M1.6 3.4L3 5L5.6 1.6" fill="none" stroke="#1f9a3c" stroke-width="1.2"/></svg>
<svg class="i" style="left:47px;top:213.4px" width="9" height="9" viewBox="0 0 9 9"><path d="M1 1.6Q4.5 -0.4 8 1.6Q8 6.4 4.5 8.4Q1 6.4 1 1.6Z" fill="#e65a2a"/><path d="M4.5 1V8.4" stroke="#3a47b8" stroke-width="1.1"/><path d="M4.5 1Q8 1 8 1.6Q8 6.4 4.5 8.4Z" fill="#4a5ad0"/></svg>
<span class="t" style="transform:scaleX(0.905);left:56.5px;top:213.3px;font-size:8px;line-height:10px;color:#9c9c9c;">Revolve (2)</span>
<svg class="i" style="left:122.5px;top:214.4px" width="7" height="7" viewBox="0 0 7 7"><path d="M0.8 3.6L2.8 5.8L6.4 0.9" fill="none" stroke="#27a844" stroke-width="1.5"/></svg>
<svg class="i" style="left:40px;top:226.5px" width="7" height="7" viewBox="0 0 7 7"><rect x="0.5" y="0.5" width="6" height="6" fill="#fff" stroke="#2d2d2d" stroke-width="0.9"/><path d="M1.6 3.4L3 5L5.6 1.6" fill="none" stroke="#1f9a3c" stroke-width="1.2"/></svg>
<svg class="i" style="left:47px;top:225.5px" width="9" height="9" viewBox="0 0 9 9"><path d="M1 7.6Q1.6 2.6 4 3.6Q6 4.4 8.4 7.6Z" fill="#f0a23a"/><path d="M1.6 1.4L3.6 4" stroke="#d4382c" stroke-width="0.9"/><circle cx="2" cy="2" r="1" fill="#f3c24a"/></svg>
<span class="t" style="transform:scaleX(0.921);left:56.5px;top:225.4px;font-size:8px;line-height:10px;color:#9c9c9c;">Extracted Body (3)</span>
<svg class="i" style="left:122.5px;top:226.5px" width="7" height="7" viewBox="0 0 7 7"><path d="M0.8 3.6L2.8 5.8L6.4 0.9" fill="none" stroke="#27a844" stroke-width="1.5"/></svg>
<svg class="i" style="left:40px;top:238.6px" width="7" height="7" viewBox="0 0 7 7"><rect x="0.5" y="0.5" width="6" height="6" fill="#fff" stroke="#2d2d2d" stroke-width="0.9"/><path d="M1.6 3.4L3 5L5.6 1.6" fill="none" stroke="#1f9a3c" stroke-width="1.2"/></svg>
<svg class="i" style="left:47px;top:237.6px" width="9" height="9" viewBox="0 0 9 9"><path d="M1 1.4L6.4 0.8L8 2.6V8L1.4 7.6Z" fill="#fafafa" stroke="#555" stroke-width="0.8"/></svg>
<span class="t" style="transform:scaleX(0.910);left:56.5px;top:237.5px;font-size:8px;line-height:10px;color:#9c9c9c;">Datum Plane (4)</span>
<svg class="i" style="left:122.5px;top:238.6px" width="7" height="7" viewBox="0 0 7 7"><path d="M0.8 3.6L2.8 5.8L6.4 0.9" fill="none" stroke="#27a844" stroke-width="1.5"/></svg>
<svg class="i" style="left:40px;top:250.7px" width="7" height="7" viewBox="0 0 7 7"><rect x="0.5" y="0.5" width="6" height="6" fill="#fff" stroke="#2d2d2d" stroke-width="0.9"/><path d="M1.6 3.4L3 5L5.6 1.6" fill="none" stroke="#1f9a3c" stroke-width="1.2"/></svg>
<svg class="i" style="left:47px;top:249.7px" width="9" height="9" viewBox="0 0 9 9"><rect x="0.8" y="0.8" width="4" height="3.2" fill="none" stroke="#222" stroke-width="0.9"/><rect x="0.8" y="5" width="6.6" height="3" fill="none" stroke="#222" stroke-width="0.9"/><path d="M6 0.6L8.4 3.2" stroke="#d4382c" stroke-width="1"/></svg>
<span class="t" style="transform:scaleX(0.865);left:56.5px;top:249.6px;font-size:8px;line-height:10px;color:#9c9c9c;">Sketch (5) "SKET...</span>
<svg class="i" style="left:122.5px;top:250.7px" width="7" height="7" viewBox="0 0 7 7"><path d="M0.8 3.6L2.8 5.8L6.4 0.9" fill="none" stroke="#27a844" stroke-width="1.5"/></svg>
<svg class="i" style="left:40px;top:262.8px" width="7" height="7" viewBox="0 0 7 7"><rect x="0.5" y="0.5" width="6" height="6" fill="#fff" stroke="#2d2d2d" stroke-width="0.9"/><path d="M1.6 3.4L3 5L5.6 1.6" fill="none" stroke="#1f9a3c" stroke-width="1.2"/></svg>
<svg class="i" style="left:47px;top:261.8px" width="9" height="9" viewBox="0 0 9 9"><path d="M1 2Q4.5 0 8 2" fill="none" stroke="#d4382c" stroke-width="0.9"/><path d="M4.5 2.4V5" stroke="#555" stroke-width="0.7"/><path d="M0.6 6.4L4.5 4.6L8.4 6.4L4.5 8.4Z" fill="#8a7ad8" stroke="#4a3f9a" stroke-width="0.5"/></svg>
<span class="t" style="transform:scaleX(0.871);left:56.5px;top:261.7px;font-size:8px;line-height:10px;color:#9c9c9c;">Projected Curve (...</span>
<svg class="i" style="left:122.5px;top:262.8px" width="7" height="7" viewBox="0 0 7 7"><path d="M0.8 3.6L2.8 5.8L6.4 0.9" fill="none" stroke="#27a844" stroke-width="1.5"/></svg>
<svg class="i" style="left:40px;top:274.9px" width="7" height="7" viewBox="0 0 7 7"><rect x="0.5" y="0.5" width="6" height="6" fill="#fff" stroke="#2d2d2d" stroke-width="0.9"/><path d="M1.6 3.4L3 5L5.6 1.6" fill="none" stroke="#1f9a3c" stroke-width="1.2"/></svg>
<svg class="i" style="left:47px;top:273.9px" width="9" height="9" viewBox="0 0 9 9"><path d="M1 4Q3 0.6 6 1.6L8 6Q5 8.6 2.4 8Z" fill="#5a7ae0"/><path d="M5 0.6L7.6 4.6" stroke="#d4382c" stroke-width="1"/><path d="M2 5Q4 3.4 6.4 4.6" stroke="#dfe6fa" stroke-width="0.8" fill="none"/></svg>
<span class="t" style="transform:scaleX(0.885);left:56.5px;top:273.8px;font-size:8px;line-height:10px;color:#9c9c9c;">Trim Sheet (7)</span>
<svg class="i" style="left:122.5px;top:274.9px" width="7" height="7" viewBox="0 0 7 7"><path d="M0.8 3.6L2.8 5.8L6.4 0.9" fill="none" stroke="#27a844" stroke-width="1.5"/></svg>
<div style="left:187.2px;top:138.5px;width:1.6px;height:43px;background:#5f5f5f;"></div>
<div style="left:30.8px;top:290.6px;width:114.5px;height:1.4px;background:#5f5f5f;"></div>
<span class="t" style="transform:scaleX(0.905);left:22.5px;top:302.2px;font-size:9.6px;line-height:11.6px;color:#2f7f9f;">Dependencies</span>
<svg class="i" style="left:183.5px;top:304.2px" width="8" height="6.4" viewBox="0 0 8 6.4"><path d="M0.8 1L4 5.4L7.2 1" fill="none" stroke="#23708f" stroke-width="1.6"/></svg>
<div style="left:19.3px;top:313.5px;width:174.6px;height:0.7px;background:#e2e2e2;"></div>
<span class="t" style="transform:scaleX(0.887);left:22.5px;top:316.2px;font-size:9.6px;line-height:11.6px;color:#2f7f9f;">Details</span>
<svg class="i" style="left:183.5px;top:318.2px" width="8" height="6.4" viewBox="0 0 8 6.4"><path d="M0.8 5.4L4 1.2L7.2 5.4" fill="none" stroke="#23708f" stroke-width="1.6"/></svg>
<div style="left:22.5px;top:331px;width:168.5px;height:146px;background:#ffffff;"></div>
<div style="left:22.5px;top:331px;width:168.5px;height:12px;background:#f0f0f0;"></div>
<div style="left:22.5px;top:354.8px;width:168.5px;height:0.5px;background:#ececec;"></div>
<div style="left:22.5px;top:355.05px;width:168.5px;height:12.05px;background:#f7f7f7;"></div>
<div style="left:22.5px;top:366.85px;width:168.5px;height:0.5px;background:#ececec;"></div>
<div style="left:22.5px;top:378.9px;width:168.5px;height:0.5px;background:#ececec;"></div>
<div style="left:22.5px;top:379.15px;width:168.5px;height:12.05px;background:#f7f7f7;"></div>
<div style="left:22.5px;top:390.95px;width:168.5px;height:0.5px;background:#ececec;"></div>
<div style="left:22.5px;top:403px;width:168.5px;height:0.5px;background:#ececec;"></div>
<div style="left:22.5px;top:403.25px;width:168.5px;height:12.05px;background:#f7f7f7;"></div>
<div style="left:22.5px;top:415.05px;width:168.5px;height:0.5px;background:#ececec;"></div>
<div style="left:22.5px;top:427.1px;width:168.5px;height:0.5px;background:#ececec;"></div>
<div style="left:22.5px;top:427.35px;width:168.5px;height:12.05px;background:#f7f7f7;"></div>
<div style="left:22.5px;top:439.15px;width:168.5px;height:0.5px;background:#ececec;"></div>
<div style="left:22.5px;top:451.2px;width:168.5px;height:0.5px;background:#ececec;"></div>
<div style="left:22.5px;top:451.45px;width:168.5px;height:12.05px;background:#f7f7f7;"></div>
<div style="left:22.5px;top:463.25px;width:168.5px;height:0.5px;background:#ececec;"></div>
<div style="left:22.5px;top:475.3px;width:168.5px;height:0.5px;background:#ececec;"></div>
<div style="left:67.5px;top:331px;width:0.7px;height:145px;background:#e9e9e9;"></div>
<div style="left:95.5px;top:331px;width:0.7px;height:145px;background:#e9e9e9;"></div>
<div style="left:143px;top:331px;width:0.7px;height:145px;background:#e9e9e9;"></div>
<span class="t" style="transform:scaleX(0.931);left:26.5px;top:332.8px;font-size:7.6px;line-height:9.6px;color:#1c1c1c;">Parameter</span>
<span class="t" style="transform:scaleX(0.981);left:71px;top:332.8px;font-size:7.6px;line-height:9.6px;color:#1c1c1c;">Value</span>
<span class="t" style="transform:scaleX(0.874);left:98.5px;top:332.8px;font-size:7.6px;line-height:9.6px;color:#1c1c1c;">Expressi...</span>
<svg class="i" style="left:133.5px;top:335.6px" width="5" height="3.4" viewBox="0 0 5 3.4"><path d="M0.2 3.2L2.5 0.2L4.8 3.2Z" fill="#222"/></svg>
<div style="left:19.3px;top:478.5px;width:174.6px;height:0.7px;background:#e2e2e2;"></div>
<span class="t" style="transform:scaleX(0.879);left:22.5px;top:482.2px;font-size:9.6px;line-height:11.6px;color:#2f7f9f;">Preview</span>
<svg class="i" style="left:183.5px;top:484.2px" width="8" height="6.4" viewBox="0 0 8 6.4"><path d="M0.8 1L4 5.4L7.2 1" fill="none" stroke="#23708f" stroke-width="1.6"/></svg>
<div style="left:19.3px;top:494px;width:174.6px;height:0.7px;background:#e2e2e2;"></div>
<div style="left:199.6px;top:99.6px;width:760.4px;height:11.6px;background:#ffffff;"></div>
<div style="left:199.6px;top:111.2px;width:760.4px;height:1.4px;background:#63a9c2;"></div>
<div style="left:199.6px;top:99.4px;width:64.2px;height:12.4px;background:#4f9fba;"></div>
<svg class="i" style="left:202px;top:101px" width="9" height="9" viewBox="0 0 9 9"><circle cx="4.5" cy="4.5" r="4" fill="#2b45c8"/><path d="M2.2 5.6Q2.4 2.2 5.6 2Q4 3.6 4.8 5.2Q5.8 6.6 7.2 5.2Q6.6 7.4 4.4 7.4Q2.6 7.2 2.2 5.6Z" fill="#e9eefc"/></svg>
<span class="t" style="transform:scaleX(0.970);left:212.5px;top:100.8px;font-size:8px;line-height:10px;color:#ffffff;">model19.prt</span>
<svg class="i" style="left:255.6px;top:102.9px" width="5.2" height="5.2" viewBox="0 0 5.2 5.2"><path d="M0.6 0.6L4.8 4.8M4.8 0.6L0.6 4.8" stroke="#fff" stroke-width="1.2"/></svg>
<div style="left:199.1px;top:112.5px;width:0.9px;height:384.5px;background:#b4b4b4;"></div>
<div style="left:959px;top:112.5px;width:1px;height:384.5px;background:#e4e4e4;"></div>
<div style="left:0px;top:497px;width:960px;height:12px;background:#ffffff;"></div>
<div style="left:199.6px;top:496.4px;width:760.4px;height:0.9px;background:#b5b5b5;"></div>
<span class="t" style="transform:scaleX(0.950);left:2px;top:498.9px;font-size:7.4px;line-height:9.4px;color:#111;font-weight:bold;">Select objects and use MB3, or double-click an object</span>
<span class="t" style="transform:scaleX(0.950);left:453.5px;top:498.9px;font-size:7.4px;line-height:9.4px;color:#111;font-weight:bold;">Restore data was reset by this operation</span>
<svg class="i" style="left:914.4px;top:499px" width="8" height="8" viewBox="0 0 8 8"><rect x="0.6" y="0.6" width="6.8" height="6.8" fill="#ededed" stroke="#cfcfcf" stroke-width="0.7"/><path d="M2 2.6H6M2 4H6M2 5.4H6" stroke="#c4c4c4" stroke-width="0.6"/></svg>
<svg class="i" style="left:924.8px;top:499px" width="8" height="8" viewBox="0 0 8 8"><path d="M0.5 2.2V0.5H2.2M5.8 0.5H7.5V2.2M7.5 5.8V7.5H5.8M2.2 7.5H0.5V5.8" fill="none" stroke="#7aa7b8" stroke-width="0.8"/><rect x="2" y="2" width="4" height="4" fill="#8fb4c4"/></svg>
<div style="left:0px;top:509.2px;width:960px;height:30.8px;background:linear-gradient(90deg,#f2e5d3 0%,#f1e5d6 35%,#f0e6dc 60%,#efe8e3 80%,#eee9e8 100%);"></div>
<div style="left:0px;top:508.9px;width:960px;height:0.9px;background:#5e5e5e;"></div>
<svg class="i" style="left:13px;top:514px" width="16" height="16" viewBox="0 0 16 16"><circle cx="6.8" cy="9.6" r="6.2" fill="#f28c1c"/><circle cx="6.2" cy="9" r="4.4" fill="#f7a833"/><circle cx="11.2" cy="4.8" r="4" fill="#c8281e"/><text x="11.2" y="6.8" font-size="5.4" font-weight="bold" text-anchor="middle" fill="#fff" font-family="Liberation Sans, sans-serif">1</text></svg>
<span class="t" style="transform:scaleX(0.820);left:32.5px;top:515.3px;font-size:8.2px;line-height:10.2px;color:#1a1a1a;">10°C</span>
<span class="t" style="transform:scaleX(0.904);left:32.5px;top:524.9px;font-size:8.2px;line-height:10.2px;color:#777;">Sunny</span>
<svg class="i" style="left:306px;top:517.6px" width="15.2" height="15.2" viewBox="0 0 16 16"><defs><linearGradient id="wl" x1="0" y1="0" x2="1" y2="1"><stop offset="0" stop-color="#4cc2f5"/><stop offset="1" stop-color="#1586d8"/></linearGradient></defs><rect x="0.5" y="0.5" width="7" height="7" fill="url(#wl)"/><rect x="8.4" y="0.5" width="7" height="7" fill="url(#wl)"/><rect x="0.5" y="8.4" width="7" height="7" fill="url(#wl)"/><rect x="8.4" y="8.4" width="7" height="7" fill="url(#wl)"/></svg>
<div style="left:330.2px;top:515.6px;width:136.6px;height:18.8px;background:#fcfaf8;border-radius:9.4px;border:0.6px solid #e6ddd0;"></div>
<svg class="i" style="left:336.8px;top:520.6px" width="10" height="10" viewBox="0 0 10 10"><circle cx="4" cy="4" r="3.1" fill="none" stroke="#222" stroke-width="1.1"/><path d="M6.2 6.2L9 9" stroke="#222" stroke-width="1.2"/></svg>
<span class="t" style="transform:scaleX(0.957);left:352.6px;top:520.4px;font-size:8.4px;line-height:10.4px;color:#5a5a5a;">Search</span>
<svg class="i" style="left:437.4px;top:516.6px" width="26.8" height="17" viewBox="0 0 30 19"><path d="M3 2Q1.6 6 3.6 9.6L2.6 16" fill="none" stroke="#8d76c8" stroke-width="1.6"/><path d="M7 13.4Q9 8 14 7.4Q15.6 3.8 19 4.4Q22 8.4 27.6 10.4Q29.4 13 27 14.6Q16 17.6 8 15.6Q6.4 15 7 13.4Z" fill="#2f78c8"/><path d="M7.4 14.6Q16 16.8 27.4 13.8" fill="none" stroke="#e9f1fb" stroke-width="1.2"/><path d="M14 7.4Q16.4 8.4 18 11M16.4 6Q18.6 7.4 20 9.6" stroke="#9cc4ee" stroke-width="0.9" fill="none"/></svg>
<svg class="i" style="left:473.8px;top:518.6px" width="14" height="14" viewBox="0 0 14 14"><rect x="1" y="1" width="9" height="9" rx="1" fill="#f1efec" stroke="#cfcac2" stroke-width="0.5"/><path d="M1 4V12.4H11.4V10H3.6V4Z" fill="#222"/><rect x="3.6" y="1.6" width="8.6" height="8.2" rx="0.8" fill="#e9e6e2"/><path d="M3.4 3.4V10.2H10.4" fill="none" stroke="#333" stroke-width="1.6"/></svg>
<svg class="i" style="left:501.8px;top:517.3px" width="15.4" height="15.4" viewBox="0 0 15 15"><defs><linearGradient id="cp" x1="0" y1="0" x2="1" y2="1"><stop offset="0" stop-color="#2f8fe8"/><stop offset="0.35" stop-color="#8a5fe0"/><stop offset="0.65" stop-color="#e8507a"/><stop offset="1" stop-color="#f7b23a"/></linearGradient></defs><path d="M5 1.4H9.6Q11.6 1.4 12.2 3.4L14 9Q14.6 11.4 12.4 11.6H10.8L10.2 13Q9.6 14 8.4 14H4.4Q2.2 14 1.6 11.8L0.8 7Q0.6 4.4 3 4.2L3.4 2.8Q3.8 1.4 5 1.4Z" fill="url(#cp)"/><path d="M5.6 4.8H9L10 10.4H6.4Z" fill="#f6eee6"/></svg>
<svg class="i" style="left:529.4px;top:517.4px" width="15.2" height="15.2" viewBox="0 0 15 15"><circle cx="7.5" cy="7.5" r="7" fill="#e84335"/><path d="M7.5 7.5L1.45 4A7 7 0 0 0 7.5 14.5L11 8.4Z" fill="#31a952"/><path d="M7.5 7.5L11 8.4L7.5 14.5A7 7 0 0 0 13.55 4H7.5Z" fill="#fbbc08"/><circle cx="7.5" cy="7.5" r="3.3" fill="#fff"/><circle cx="7.5" cy="7.5" r="2.6" fill="#4688f1"/></svg>
<svg class="i" style="left:556.4px;top:518px" width="16.2" height="14.2" viewBox="0 0 16 14"><path d="M1 2Q1 1 2 1H6L7.4 2.6H14Q15 2.6 15 3.6V5H1Z" fill="#e7a92c"/><rect x="1" y="4" width="14" height="9" rx="1" fill="#f9ce48"/><rect x="1" y="9.6" width="14" height="3.4" rx="1" fill="#e9b23a"/><rect x="4.6" y="9.8" width="6.8" height="2.4" fill="#4a7fd8"/></svg>
<svg class="i" style="left:584px;top:516.8px" width="16" height="16" viewBox="0 0 16 16"><circle cx="8" cy="9" r="6.4" fill="#2f6fd0"/><path d="M2.6 9Q8 3 13.4 9Q8 16 2.6 9Z" fill="#5fb0ee"/><path d="M3 1L9 8L5.4 9.6Z" fill="#d4282c"/><path d="M12 1.6L8 8.6L11.4 9Z" fill="#f3c02a"/><circle cx="8" cy="10" r="2.2" fill="#f6f6f6"/></svg>
<svg class="i" style="left:612.6px;top:518px" width="14" height="14" viewBox="0 0 14 14"><rect x="0.6" y="0.6" width="12.8" height="12.8" rx="1.4" fill="#2b2b2b"/><path d="M13.4 8.4V12Q13.4 13.4 12 13.4H8.4Z" fill="#f7d038"/><path d="M8.4 13.4L8.4 9.4Q8.4 8.4 9.4 8.4H13.4Z" fill="#f9e27a"/></svg>
<svg class="i" style="left:640px;top:518px" width="14" height="14" viewBox="0 0 14 14"><rect x="0.6" y="0.6" width="12.8" height="12.8" rx="2.4" fill="#2f7fe0"/><path d="M0.8 11L5 6L8 9.4L10 7.6L13.2 11.4Q13 13.4 11 13.4H3Q0.8 13.4 0.8 11Z" fill="#9fd0f8"/><path d="M2 12.6L5 8L8.6 12.8Z" fill="#e9f4fd"/><circle cx="9.8" cy="4.2" r="1.5" fill="#fff"/></svg>
<div style="left:535.1px;top:534.3px;width:4.2px;height:1.6px;background:#8d8d8d;border-radius:0.8px;"></div>
<div style="left:562.6px;top:534.3px;width:4.2px;height:1.6px;background:#8d8d8d;border-radius:0.8px;"></div>
<div style="left:589.6px;top:534.3px;width:4.2px;height:1.6px;background:#8d8d8d;border-radius:0.8px;"></div>
<div style="left:617.6px;top:534.3px;width:4.2px;height:1.6px;background:#8d8d8d;border-radius:0.8px;"></div>
<div style="left:645.1px;top:534.3px;width:4.2px;height:1.6px;background:#8d8d8d;border-radius:0.8px;"></div>
<svg class="i" style="left:796.5px;top:521.5px" width="9" height="6" viewBox="0 0 9 6"><path d="M0.8 5L4.5 1.2L8.2 5" fill="none" stroke="#333" stroke-width="1.1"/></svg>
<span class="t" style="transform:scaleX(0.865);left:817.8px;top:515.9px;font-size:8px;line-height:10px;color:#1a1a1a;">ENG</span>
<span class="t" style="transform:scaleX(0.975);left:821.6px;top:525.7px;font-size:8px;line-height:10px;color:#1a1a1a;">IN</span>
<svg class="i" style="left:842.6px;top:519px" width="12" height="10" viewBox="0 0 12 10"><path d="M1 3.6Q6 -0.8 11 3.6M2.8 5.6Q6 2.8 9.2 5.6M4.5 7.4Q6 6.2 7.5 7.4" fill="none" stroke="#222" stroke-width="1"/><circle cx="6" cy="8.8" r="0.9" fill="#222"/></svg>
<svg class="i" style="left:858.5px;top:519px" width="12" height="10" viewBox="0 0 12 10"><path d="M0.8 3.6H2.8L5.4 1.2V8.8L2.8 6.4H0.8Z" fill="none" stroke="#222" stroke-width="0.9"/><path d="M7 3.4Q8 5 7 6.6M8.6 2Q10.4 5 8.6 8" fill="none" stroke="#222" stroke-width="0.9"/></svg>
<svg class="i" style="left:872.6px;top:519.8px" width="12" height="8.3" viewBox="0 0 13 9"><rect x="1" y="2" width="10" height="5.6" rx="1.2" fill="#222"/><rect x="11.2" y="3.6" width="1.2" height="2.4" fill="#222"/><path d="M3 0.6L5.6 2.4L3.4 3.4Z" fill="#222"/></svg>
<span class="t" style="transform:scaleX(0.879);left:915.2px;top:515.9px;font-size:8px;line-height:10px;color:#1a1a1a;">10:27</span>
<span class="t" style="transform:scaleX(0.948);left:894px;top:525.7px;font-size:8px;line-height:10px;color:#1a1a1a;">08-01-2025</span>
<svg class="i" style="left:937.2px;top:519.2px" width="11" height="11" viewBox="0 0 11 11"><path d="M2 7.6Q3 6.6 3 4.4Q3 1.6 5.5 1.6Q8 1.6 8 4.4Q8 6.6 9 7.6Z" fill="none" stroke="#222" stroke-width="0.9"/><path d="M4.4 8.6Q5.5 9.8 6.6 8.6" fill="none" stroke="#222" stroke-width="0.9"/><text x="8.4" y="6" font-size="4.6" fill="#222" font-family="Liberation Sans, sans-serif">z</text></svg>
</div></body></html>
